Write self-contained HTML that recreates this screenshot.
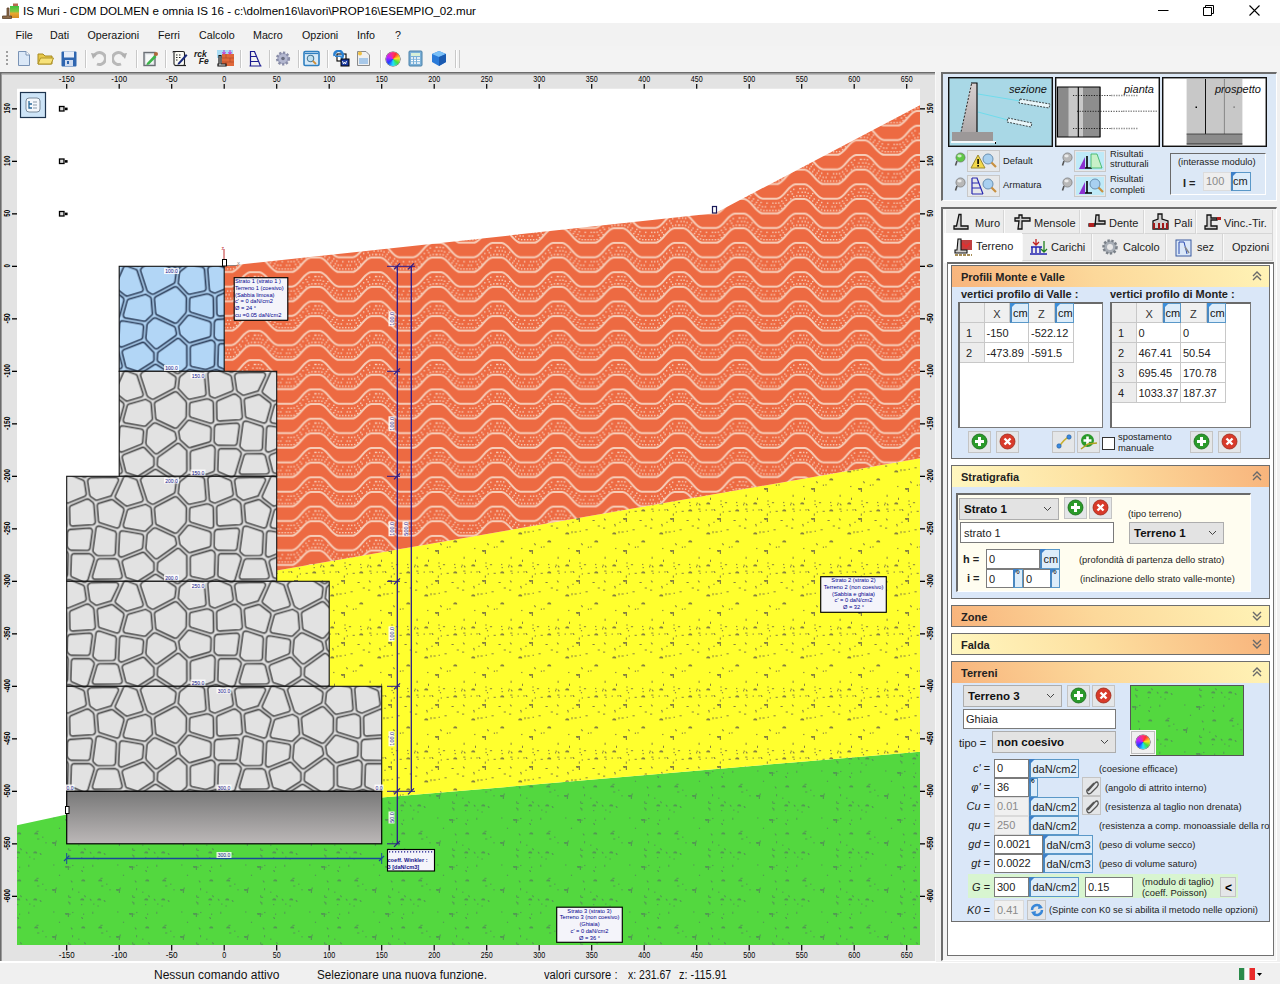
<!DOCTYPE html><html><head><meta charset="utf-8"><style>
*{margin:0;padding:0;box-sizing:border-box}
html,body{width:1280px;height:984px;overflow:hidden;background:#f0f0f0;font-family:"Liberation Sans",sans-serif;color:#000}
div{position:absolute}
.t{white-space:nowrap;line-height:1}
.ic{position:absolute}
.btn{background:#ebebeb;border:1px solid #c9c9c9}
.hdr{border:1px solid #6e6e6e;font-weight:bold;font-size:11.5px;color:#1e1e1e}
.inp{background:#fff;border:1px solid #828790;font-size:11px}
.unit{background:#fff;border:1px solid #3d8ed8;font-size:11px}
.cell{font-size:11px}
</style></head><body>
<div style="left:0px;top:0px;width:1280px;height:23px;background:#fff"></div>
<svg style="position:absolute;left:2px;top:3px" width="17" height="16"><defs><linearGradient id="ti" x1="0" y1="0" x2="0" y2="1"><stop offset="0" stop-color="#40c040"/><stop offset="0.45" stop-color="#80c840"/><stop offset="0.6" stop-color="#e8a830"/><stop offset="1" stop-color="#d88a20"/></linearGradient></defs><rect x="11" y="0.5" width="5" height="3" fill="#b86a50"/><rect x="8" y="3" width="9" height="12" fill="url(#ti)"/><path d="M0.5,15.5 H9.5 V13 H7 V5 H5 V13 H0.5Z" fill="#8a6a48" stroke="#5a4028" stroke-width="0.8"/></svg>
<div class="t" style="left:23px;top:5px;font-size:11.6px;color:#000">IS Muri - CDM DOLMEN e omnia IS 16 - c:\dolmen16\lavori\PROP16\ESEMPIO_02.mur</div>
<svg style="position:absolute;left:1150px;top:0" width="130" height="22"><path d="M8,10.5 H18.5" stroke="#000" stroke-width="1"/><path d="M53.5,7.5 h8 v8 h-8z M55.5,7.5 v-2 h8 v8 h-2" fill="none" stroke="#000" stroke-width="1"/><path d="M99.5,5.5 L109.5,15.5 M109.5,5.5 L99.5,15.5" stroke="#000" stroke-width="1.1"/></svg>
<div style="left:0px;top:23px;width:1280px;height:23px;background:#f2f2f2"></div>
<div class="t" style="left:15.5px;top:29.5px;font-size:10.7px;color:#111">File</div>
<div class="t" style="left:50px;top:29.5px;font-size:10.7px;color:#111">Dati</div>
<div class="t" style="left:87.5px;top:29.5px;font-size:10.7px;color:#111">Operazioni</div>
<div class="t" style="left:158px;top:29.5px;font-size:10.7px;color:#111">Ferri</div>
<div class="t" style="left:199px;top:29.5px;font-size:10.7px;color:#111">Calcolo</div>
<div class="t" style="left:253px;top:29.5px;font-size:10.7px;color:#111">Macro</div>
<div class="t" style="left:302px;top:29.5px;font-size:10.7px;color:#111">Opzioni</div>
<div class="t" style="left:357px;top:29.5px;font-size:10.7px;color:#111">Info</div>
<div class="t" style="left:395px;top:29.5px;font-size:10.7px;color:#111">?</div>
<div style="left:0px;top:46px;width:1280px;height:26px;background:#f3f3f3"></div>
<div id="tb" style="left:0;top:46px;width:470px;height:26px"></div>
<svg style="position:absolute;left:5px;top:50px" width="4" height="17" viewBox="0 0 4 17"><rect x="1" y="1" width="2" height="2" fill="#a0a0a0"/><rect x="1" y="5" width="2" height="2" fill="#a0a0a0"/><rect x="1" y="9" width="2" height="2" fill="#a0a0a0"/><rect x="1" y="13" width="2" height="2" fill="#a0a0a0"/></svg>
<svg style="position:absolute;left:17px;top:50px" width="14" height="17" viewBox="0 0 14 17"><path d="M1.5,1.5 H9 L12.5,5 V15.5 H1.5Z" fill="#dbe8f7" stroke="#7a93b5"/><path d="M9,1.5 V5 H12.5" fill="#fff" stroke="#7a93b5"/></svg>
<svg style="position:absolute;left:37px;top:51px" width="17" height="15" viewBox="0 0 17 15"><path d="M1,3 H6 L8,5 H15 V13 H1Z" fill="#e7c84a" stroke="#a88a20"/><path d="M1,13 L3.5,7 H16.5 L14,13Z" fill="#f7e27a" stroke="#b09428"/></svg>
<svg style="position:absolute;left:61px;top:50px" width="16" height="17" viewBox="0 0 16 17"><rect x="0.5" y="1.5" width="15" height="15" rx="1" fill="#2f66b0"/><rect x="3" y="1.5" width="10" height="6" fill="#e8eef8"/><rect x="4" y="10" width="8" height="6" fill="#cfdcf0"/><rect x="6" y="11" width="2" height="3" fill="#2f66b0"/></svg>
<svg style="position:absolute;left:84.5px;top:50px" width="2" height="18" viewBox="0 0 2 18"><rect x="0" y="0" width="1" height="18" fill="#c8c8c8"/><rect x="1" y="0" width="1" height="18" fill="#fff"/></svg>
<svg style="position:absolute;left:135.5px;top:50px" width="2" height="18" viewBox="0 0 2 18"><rect x="0" y="0" width="1" height="18" fill="#c8c8c8"/><rect x="1" y="0" width="1" height="18" fill="#fff"/></svg>
<svg style="position:absolute;left:165px;top:50px" width="2" height="18" viewBox="0 0 2 18"><rect x="0" y="0" width="1" height="18" fill="#c8c8c8"/><rect x="1" y="0" width="1" height="18" fill="#fff"/></svg>
<svg style="position:absolute;left:240px;top:50px" width="2" height="18" viewBox="0 0 2 18"><rect x="0" y="0" width="1" height="18" fill="#c8c8c8"/><rect x="1" y="0" width="1" height="18" fill="#fff"/></svg>
<svg style="position:absolute;left:269px;top:50px" width="2" height="18" viewBox="0 0 2 18"><rect x="0" y="0" width="1" height="18" fill="#c8c8c8"/><rect x="1" y="0" width="1" height="18" fill="#fff"/></svg>
<svg style="position:absolute;left:298px;top:50px" width="2" height="18" viewBox="0 0 2 18"><rect x="0" y="0" width="1" height="18" fill="#c8c8c8"/><rect x="1" y="0" width="1" height="18" fill="#fff"/></svg>
<svg style="position:absolute;left:327px;top:50px" width="2" height="18" viewBox="0 0 2 18"><rect x="0" y="0" width="1" height="18" fill="#c8c8c8"/><rect x="1" y="0" width="1" height="18" fill="#fff"/></svg>
<svg style="position:absolute;left:379.5px;top:50px" width="2" height="18" viewBox="0 0 2 18"><rect x="0" y="0" width="1" height="18" fill="#c8c8c8"/><rect x="1" y="0" width="1" height="18" fill="#fff"/></svg>
<svg style="position:absolute;left:454.5px;top:50px" width="2" height="18" viewBox="0 0 2 18"><rect x="0" y="0" width="1" height="18" fill="#c8c8c8"/><rect x="1" y="0" width="1" height="18" fill="#fff"/></svg>
<svg style="position:absolute;left:90px;top:50px" width="16" height="17" viewBox="0 0 16 17"><path d="M4,6 A6,6 0 1 1 7,14" fill="none" stroke="#b8b8b8" stroke-width="3"/><path d="M1,3 L7,4 L3,9Z" fill="#b0b0b0"/></svg>
<svg style="position:absolute;left:112px;top:50px" width="16" height="17" viewBox="0 0 16 17"><path d="M12,6 A6,6 0 1 0 9,14" fill="none" stroke="#b8b8b8" stroke-width="3"/><path d="M15,3 L9,4 L13,9Z" fill="#b0b0b0"/></svg>
<svg style="position:absolute;left:142px;top:50px" width="17" height="17" viewBox="0 0 17 17"><rect x="2" y="2.5" width="11" height="13" fill="#dfe3e6" stroke="#6a6f75" stroke-width="1.4"/><rect x="4" y="4.5" width="7" height="9" fill="#f6f8f8"/><path d="M5,13 L12.5,5 L14.5,7 L7,14.5 L4.5,15Z" fill="#3cb54a"/><circle cx="14" cy="4" r="2" fill="#b0683a"/></svg>
<svg style="position:absolute;left:171px;top:50px" width="17" height="17" viewBox="0 0 17 17"><path d="M3,1.5 H12 Q13.5,1.5 13.5,3 V14 Q13.5,15.5 12,15.5 H5 Q3,15.5 3,14Z" fill="#fbfbf4" stroke="#222" stroke-width="1.1"/><path d="M1.5,2 Q3,0.5 4.5,2" fill="none" stroke="#222"/><path d="M5,5h1.5M8,5h1.5M5,7.5h1.5M8,7.5h1.5M5,10h1.5" stroke="#222" stroke-width="1.2"/><path d="M7,13 L15,4 L16.5,5.5 L8.5,14.2 L6.5,14.8Z" fill="#1a2a7a"/><path d="M4,15.5 H15" stroke="#222" stroke-width="1.2"/></svg>
<div class="t" style="left:194px;top:50.5px;font:italic bold 8.5px 'Liberation Sans',sans-serif;color:#222;line-height:7.5px">rck<br>&nbsp;&nbsp;Fe</div>
<svg style="position:absolute;left:216px;top:49px" width="18" height="18" viewBox="0 0 18 18"><rect x="1" y="1" width="16" height="8" fill="#a8dcf4"/><rect x="6" y="5" width="12" height="12" fill="#e0683a"/><path d="M6,9H18M6,13H18M10,5v4M14,9v4M10,13v4" stroke="#b04a28" stroke-width="0.7"/><path d="M2,17 H10 V15 H5 V6.5 H3 V15 H2Z" fill="#f2f2f2" stroke="#111" stroke-width="1.2"/><path d="M8,1v4M6.3,3.3l1.7,1.7 1.7-1.7M14,1v4M12.3,3.3l1.7,1.7 1.7-1.7" stroke="#c040d0" stroke-width="1.1" fill="none"/></svg>
<svg style="position:absolute;left:248px;top:50px" width="15" height="17" viewBox="0 0 15 17"><path d="M2.5,1 V16 M2,1.5 H6.5 L12.5,16 M2,6.5 H8.5 M2,11.5 H10.5 M1.5,16 H13.5" fill="none" stroke="#1c1c90" stroke-width="1.2"/></svg>
<svg style="position:absolute;left:275px;top:50px" width="16" height="17" viewBox="0 0 16 17"><circle cx="8" cy="8.5" r="5.8" fill="#a8acc8" stroke="#8a8ea8" stroke-width="2.6" stroke-dasharray="2.2 1.6"/><circle cx="8" cy="8.5" r="4.2" fill="#b4b8d0"/><circle cx="8" cy="8.5" r="1.8" fill="#6a6e80"/></svg>
<svg style="position:absolute;left:303px;top:50px" width="17" height="17" viewBox="0 0 17 17"><rect x="1" y="1.5" width="15" height="14" rx="1.2" fill="#d8eaf8" stroke="#2f7fc0" stroke-width="1.6"/><path d="M2,3.5 H15" stroke="#2f7fc0" stroke-width="1.2"/><circle cx="7.5" cy="8.5" r="3.2" fill="#bfe0f0" stroke="#4a7a9a" stroke-width="1.1"/><path d="M9.8,10.8 L13,14" stroke="#d0903a" stroke-width="1.8"/></svg>
<svg style="position:absolute;left:333px;top:50px" width="17" height="17" viewBox="0 0 17 17"><rect x="4" y="4" width="9" height="7" fill="#fff" stroke="#000" stroke-width="1.1"/><path d="M1.5,6 A4.2,4.2 0 1 1 8,8.5" fill="none" stroke="#2a80d0" stroke-width="2.4"/><path d="M2,6.2 H8.5" stroke="#2a80d0" stroke-width="1.5"/><rect x="8" y="9" width="8" height="7" fill="#1a3aa0" stroke="#000" stroke-width="1"/><path d="M9.5,11 l1,3 1-2 1,2 1-3" stroke="#fff" fill="none" stroke-width="0.9"/></svg>
<svg style="position:absolute;left:356px;top:50px" width="15" height="17" viewBox="0 0 15 17"><path d="M1.5,1.5 H10 L13.5,5 V15.5 H1.5Z" fill="#f0f0f0" stroke="#8a8a8a"/><rect x="3" y="8" width="9" height="6" fill="#a8c8e8"/><circle cx="4" cy="3.5" r="2" fill="#f0c040"/></svg>
<div style="left:386px;top:52px;width:14px;height:14px;border-radius:50%;background:conic-gradient(from 0deg,#ff3070 0deg,#ff3030 30deg,#ffe020 80deg,#40e040 130deg,#20e0ff 180deg,#2040ff 230deg,#c020ff 290deg,#ff3070 360deg);box-shadow:0 0 0 0.6px #555"></div>
<svg style="position:absolute;left:408px;top:50px" width="15" height="17" viewBox="0 0 15 17"><rect x="1" y="1" width="13" height="15" rx="1" fill="#7ab0d8" stroke="#4a80a8"/><rect x="3" y="3" width="9" height="3" fill="#d8f0d8"/><path d="M3,8h2M6,8h2M9,8h3M3,10.5h2M6,10.5h2M9,10.5h3M3,13h2M6,13h2M9,13h3" stroke="#fff" stroke-width="1.5"/></svg>
<svg style="position:absolute;left:430px;top:50px" width="17" height="17" viewBox="0 0 17 17"><path d="M2,4 L9,1 L16,4 V12 L9,16 L2,12Z" fill="#2a7ad8"/><path d="M2,4 L9,7 L16,4 L9,1Z" fill="#7ac0f8"/><path d="M9,7 V16 L16,12 V4Z" fill="#1a5ab0"/></svg>
<svg style="position:absolute;left:459px;top:50px" width="2" height="18" viewBox="0 0 2 18"><rect x="0" y="0" width="1" height="18" fill="#c8c8c8"/></svg>
<svg width="1280" height="984" style="position:absolute;left:0;top:0" font-family="Liberation Sans, sans-serif" font-size="8.5">
<rect x="0" y="72" width="936" height="890" fill="#e3e3e3"/>
<rect x="0" y="72" width="936" height="1.6" fill="#6b6b6b"/>
<rect x="0" y="72" width="1.6" height="890" fill="#6b6b6b"/>
<rect x="1.6" y="73.6" width="934" height="1" fill="#a0a0a0"/>
<rect x="935" y="72" width="1" height="890" fill="#f8f8f8"/>
<rect x="0" y="961" width="936" height="1" fill="#ffffff"/>
<rect x="66.1" y="84" width="1.2" height="6" fill="#000"/>
<text x="66.7" y="81.9" text-anchor="middle" font-size="9" textLength="15.8" lengthAdjust="spacingAndGlyphs">-150</text>
<rect x="66.1" y="945" width="1.2" height="5.5" fill="#000"/>
<text x="66.7" y="957.8" text-anchor="middle" font-size="9" textLength="15.8" lengthAdjust="spacingAndGlyphs">-150</text>
<rect x="118.6" y="84" width="1.2" height="6" fill="#000"/>
<text x="119.2" y="81.9" text-anchor="middle" font-size="9" textLength="15.8" lengthAdjust="spacingAndGlyphs">-100</text>
<rect x="118.6" y="945" width="1.2" height="5.5" fill="#000"/>
<text x="119.2" y="957.8" text-anchor="middle" font-size="9" textLength="15.8" lengthAdjust="spacingAndGlyphs">-100</text>
<rect x="171.1" y="84" width="1.2" height="6" fill="#000"/>
<text x="171.7" y="81.9" text-anchor="middle" font-size="9" textLength="11.9" lengthAdjust="spacingAndGlyphs">-50</text>
<rect x="171.1" y="945" width="1.2" height="5.5" fill="#000"/>
<text x="171.7" y="957.8" text-anchor="middle" font-size="9" textLength="11.9" lengthAdjust="spacingAndGlyphs">-50</text>
<rect x="223.6" y="84" width="1.2" height="6" fill="#000"/>
<text x="224.2" y="81.9" text-anchor="middle" font-size="9" textLength="4.0" lengthAdjust="spacingAndGlyphs">0</text>
<rect x="223.6" y="945" width="1.2" height="5.5" fill="#000"/>
<text x="224.2" y="957.8" text-anchor="middle" font-size="9" textLength="4.0" lengthAdjust="spacingAndGlyphs">0</text>
<rect x="276.1" y="84" width="1.2" height="6" fill="#000"/>
<text x="276.7" y="81.9" text-anchor="middle" font-size="9" textLength="7.9" lengthAdjust="spacingAndGlyphs">50</text>
<rect x="276.1" y="945" width="1.2" height="5.5" fill="#000"/>
<text x="276.7" y="957.8" text-anchor="middle" font-size="9" textLength="7.9" lengthAdjust="spacingAndGlyphs">50</text>
<rect x="328.6" y="84" width="1.2" height="6" fill="#000"/>
<text x="329.2" y="81.9" text-anchor="middle" font-size="9" textLength="11.9" lengthAdjust="spacingAndGlyphs">100</text>
<rect x="328.6" y="945" width="1.2" height="5.5" fill="#000"/>
<text x="329.2" y="957.8" text-anchor="middle" font-size="9" textLength="11.9" lengthAdjust="spacingAndGlyphs">100</text>
<rect x="381.1" y="84" width="1.2" height="6" fill="#000"/>
<text x="381.7" y="81.9" text-anchor="middle" font-size="9" textLength="11.9" lengthAdjust="spacingAndGlyphs">150</text>
<rect x="381.1" y="945" width="1.2" height="5.5" fill="#000"/>
<text x="381.7" y="957.8" text-anchor="middle" font-size="9" textLength="11.9" lengthAdjust="spacingAndGlyphs">150</text>
<rect x="433.6" y="84" width="1.2" height="6" fill="#000"/>
<text x="434.2" y="81.9" text-anchor="middle" font-size="9" textLength="11.9" lengthAdjust="spacingAndGlyphs">200</text>
<rect x="433.6" y="945" width="1.2" height="5.5" fill="#000"/>
<text x="434.2" y="957.8" text-anchor="middle" font-size="9" textLength="11.9" lengthAdjust="spacingAndGlyphs">200</text>
<rect x="486.1" y="84" width="1.2" height="6" fill="#000"/>
<text x="486.7" y="81.9" text-anchor="middle" font-size="9" textLength="11.9" lengthAdjust="spacingAndGlyphs">250</text>
<rect x="486.1" y="945" width="1.2" height="5.5" fill="#000"/>
<text x="486.7" y="957.8" text-anchor="middle" font-size="9" textLength="11.9" lengthAdjust="spacingAndGlyphs">250</text>
<rect x="538.6" y="84" width="1.2" height="6" fill="#000"/>
<text x="539.2" y="81.9" text-anchor="middle" font-size="9" textLength="11.9" lengthAdjust="spacingAndGlyphs">300</text>
<rect x="538.6" y="945" width="1.2" height="5.5" fill="#000"/>
<text x="539.2" y="957.8" text-anchor="middle" font-size="9" textLength="11.9" lengthAdjust="spacingAndGlyphs">300</text>
<rect x="591.1" y="84" width="1.2" height="6" fill="#000"/>
<text x="591.7" y="81.9" text-anchor="middle" font-size="9" textLength="11.9" lengthAdjust="spacingAndGlyphs">350</text>
<rect x="591.1" y="945" width="1.2" height="5.5" fill="#000"/>
<text x="591.7" y="957.8" text-anchor="middle" font-size="9" textLength="11.9" lengthAdjust="spacingAndGlyphs">350</text>
<rect x="643.6" y="84" width="1.2" height="6" fill="#000"/>
<text x="644.2" y="81.9" text-anchor="middle" font-size="9" textLength="11.9" lengthAdjust="spacingAndGlyphs">400</text>
<rect x="643.6" y="945" width="1.2" height="5.5" fill="#000"/>
<text x="644.2" y="957.8" text-anchor="middle" font-size="9" textLength="11.9" lengthAdjust="spacingAndGlyphs">400</text>
<rect x="696.1" y="84" width="1.2" height="6" fill="#000"/>
<text x="696.7" y="81.9" text-anchor="middle" font-size="9" textLength="11.9" lengthAdjust="spacingAndGlyphs">450</text>
<rect x="696.1" y="945" width="1.2" height="5.5" fill="#000"/>
<text x="696.7" y="957.8" text-anchor="middle" font-size="9" textLength="11.9" lengthAdjust="spacingAndGlyphs">450</text>
<rect x="748.6" y="84" width="1.2" height="6" fill="#000"/>
<text x="749.2" y="81.9" text-anchor="middle" font-size="9" textLength="11.9" lengthAdjust="spacingAndGlyphs">500</text>
<rect x="748.6" y="945" width="1.2" height="5.5" fill="#000"/>
<text x="749.2" y="957.8" text-anchor="middle" font-size="9" textLength="11.9" lengthAdjust="spacingAndGlyphs">500</text>
<rect x="801.1" y="84" width="1.2" height="6" fill="#000"/>
<text x="801.7" y="81.9" text-anchor="middle" font-size="9" textLength="11.9" lengthAdjust="spacingAndGlyphs">550</text>
<rect x="801.1" y="945" width="1.2" height="5.5" fill="#000"/>
<text x="801.7" y="957.8" text-anchor="middle" font-size="9" textLength="11.9" lengthAdjust="spacingAndGlyphs">550</text>
<rect x="853.6" y="84" width="1.2" height="6" fill="#000"/>
<text x="854.2" y="81.9" text-anchor="middle" font-size="9" textLength="11.9" lengthAdjust="spacingAndGlyphs">600</text>
<rect x="853.6" y="945" width="1.2" height="5.5" fill="#000"/>
<text x="854.2" y="957.8" text-anchor="middle" font-size="9" textLength="11.9" lengthAdjust="spacingAndGlyphs">600</text>
<rect x="906.1" y="84" width="1.2" height="6" fill="#000"/>
<text x="906.7" y="81.9" text-anchor="middle" font-size="9" textLength="11.9" lengthAdjust="spacingAndGlyphs">650</text>
<rect x="906.1" y="945" width="1.2" height="5.5" fill="#000"/>
<text x="906.7" y="957.8" text-anchor="middle" font-size="9" textLength="11.9" lengthAdjust="spacingAndGlyphs">650</text>
<rect x="12" y="108.2" width="5" height="1.3" fill="#000"/>
<text transform="translate(9.6,108.3) rotate(-90)" text-anchor="middle" textLength="10.2" lengthAdjust="spacingAndGlyphs" font-weight="bold">150</text>
<rect x="920" y="108.2" width="5" height="1.3" fill="#000"/>
<text transform="translate(932.5,108.3) rotate(-90)" text-anchor="middle" textLength="10.2" lengthAdjust="spacingAndGlyphs" font-weight="bold">150</text>
<rect x="12" y="160.7" width="5" height="1.3" fill="#000"/>
<text transform="translate(9.6,160.8) rotate(-90)" text-anchor="middle" textLength="10.2" lengthAdjust="spacingAndGlyphs" font-weight="bold">100</text>
<rect x="920" y="160.7" width="5" height="1.3" fill="#000"/>
<text transform="translate(932.5,160.8) rotate(-90)" text-anchor="middle" textLength="10.2" lengthAdjust="spacingAndGlyphs" font-weight="bold">100</text>
<rect x="12" y="213.2" width="5" height="1.3" fill="#000"/>
<text transform="translate(9.6,213.3) rotate(-90)" text-anchor="middle" textLength="6.8" lengthAdjust="spacingAndGlyphs" font-weight="bold">50</text>
<rect x="920" y="213.2" width="5" height="1.3" fill="#000"/>
<text transform="translate(932.5,213.3) rotate(-90)" text-anchor="middle" textLength="6.8" lengthAdjust="spacingAndGlyphs" font-weight="bold">50</text>
<rect x="12" y="265.7" width="5" height="1.3" fill="#000"/>
<text transform="translate(9.6,265.8) rotate(-90)" text-anchor="middle" textLength="3.4" lengthAdjust="spacingAndGlyphs" font-weight="bold">0</text>
<rect x="920" y="265.7" width="5" height="1.3" fill="#000"/>
<text transform="translate(932.5,265.8) rotate(-90)" text-anchor="middle" textLength="3.4" lengthAdjust="spacingAndGlyphs" font-weight="bold">0</text>
<rect x="12" y="318.2" width="5" height="1.3" fill="#000"/>
<text transform="translate(9.6,318.3) rotate(-90)" text-anchor="middle" textLength="10.2" lengthAdjust="spacingAndGlyphs" font-weight="bold">-50</text>
<rect x="920" y="318.2" width="5" height="1.3" fill="#000"/>
<text transform="translate(932.5,318.3) rotate(-90)" text-anchor="middle" textLength="10.2" lengthAdjust="spacingAndGlyphs" font-weight="bold">-50</text>
<rect x="12" y="370.7" width="5" height="1.3" fill="#000"/>
<text transform="translate(9.6,370.8) rotate(-90)" text-anchor="middle" textLength="13.6" lengthAdjust="spacingAndGlyphs" font-weight="bold">-100</text>
<rect x="920" y="370.7" width="5" height="1.3" fill="#000"/>
<text transform="translate(932.5,370.8) rotate(-90)" text-anchor="middle" textLength="13.6" lengthAdjust="spacingAndGlyphs" font-weight="bold">-100</text>
<rect x="12" y="423.2" width="5" height="1.3" fill="#000"/>
<text transform="translate(9.6,423.3) rotate(-90)" text-anchor="middle" textLength="13.6" lengthAdjust="spacingAndGlyphs" font-weight="bold">-150</text>
<rect x="920" y="423.2" width="5" height="1.3" fill="#000"/>
<text transform="translate(932.5,423.3) rotate(-90)" text-anchor="middle" textLength="13.6" lengthAdjust="spacingAndGlyphs" font-weight="bold">-150</text>
<rect x="12" y="475.7" width="5" height="1.3" fill="#000"/>
<text transform="translate(9.6,475.8) rotate(-90)" text-anchor="middle" textLength="13.6" lengthAdjust="spacingAndGlyphs" font-weight="bold">-200</text>
<rect x="920" y="475.7" width="5" height="1.3" fill="#000"/>
<text transform="translate(932.5,475.8) rotate(-90)" text-anchor="middle" textLength="13.6" lengthAdjust="spacingAndGlyphs" font-weight="bold">-200</text>
<rect x="12" y="528.2" width="5" height="1.3" fill="#000"/>
<text transform="translate(9.6,528.3) rotate(-90)" text-anchor="middle" textLength="13.6" lengthAdjust="spacingAndGlyphs" font-weight="bold">-250</text>
<rect x="920" y="528.2" width="5" height="1.3" fill="#000"/>
<text transform="translate(932.5,528.3) rotate(-90)" text-anchor="middle" textLength="13.6" lengthAdjust="spacingAndGlyphs" font-weight="bold">-250</text>
<rect x="12" y="580.7" width="5" height="1.3" fill="#000"/>
<text transform="translate(9.6,580.8) rotate(-90)" text-anchor="middle" textLength="13.6" lengthAdjust="spacingAndGlyphs" font-weight="bold">-300</text>
<rect x="920" y="580.7" width="5" height="1.3" fill="#000"/>
<text transform="translate(932.5,580.8) rotate(-90)" text-anchor="middle" textLength="13.6" lengthAdjust="spacingAndGlyphs" font-weight="bold">-300</text>
<rect x="12" y="633.2" width="5" height="1.3" fill="#000"/>
<text transform="translate(9.6,633.3) rotate(-90)" text-anchor="middle" textLength="13.6" lengthAdjust="spacingAndGlyphs" font-weight="bold">-350</text>
<rect x="920" y="633.2" width="5" height="1.3" fill="#000"/>
<text transform="translate(932.5,633.3) rotate(-90)" text-anchor="middle" textLength="13.6" lengthAdjust="spacingAndGlyphs" font-weight="bold">-350</text>
<rect x="12" y="685.7" width="5" height="1.3" fill="#000"/>
<text transform="translate(9.6,685.8) rotate(-90)" text-anchor="middle" textLength="13.6" lengthAdjust="spacingAndGlyphs" font-weight="bold">-400</text>
<rect x="920" y="685.7" width="5" height="1.3" fill="#000"/>
<text transform="translate(932.5,685.8) rotate(-90)" text-anchor="middle" textLength="13.6" lengthAdjust="spacingAndGlyphs" font-weight="bold">-400</text>
<rect x="12" y="738.2" width="5" height="1.3" fill="#000"/>
<text transform="translate(9.6,738.3) rotate(-90)" text-anchor="middle" textLength="13.6" lengthAdjust="spacingAndGlyphs" font-weight="bold">-450</text>
<rect x="920" y="738.2" width="5" height="1.3" fill="#000"/>
<text transform="translate(932.5,738.3) rotate(-90)" text-anchor="middle" textLength="13.6" lengthAdjust="spacingAndGlyphs" font-weight="bold">-450</text>
<rect x="12" y="790.7" width="5" height="1.3" fill="#000"/>
<text transform="translate(9.6,790.8) rotate(-90)" text-anchor="middle" textLength="13.6" lengthAdjust="spacingAndGlyphs" font-weight="bold">-500</text>
<rect x="920" y="790.7" width="5" height="1.3" fill="#000"/>
<text transform="translate(932.5,790.8) rotate(-90)" text-anchor="middle" textLength="13.6" lengthAdjust="spacingAndGlyphs" font-weight="bold">-500</text>
<rect x="12" y="843.2" width="5" height="1.3" fill="#000"/>
<text transform="translate(9.6,843.3) rotate(-90)" text-anchor="middle" textLength="13.6" lengthAdjust="spacingAndGlyphs" font-weight="bold">-550</text>
<rect x="920" y="843.2" width="5" height="1.3" fill="#000"/>
<text transform="translate(932.5,843.3) rotate(-90)" text-anchor="middle" textLength="13.6" lengthAdjust="spacingAndGlyphs" font-weight="bold">-550</text>
<rect x="12" y="895.7" width="5" height="1.3" fill="#000"/>
<text transform="translate(9.6,895.8) rotate(-90)" text-anchor="middle" textLength="13.6" lengthAdjust="spacingAndGlyphs" font-weight="bold">-600</text>
<rect x="920" y="895.7" width="5" height="1.3" fill="#000"/>
<text transform="translate(932.5,895.8) rotate(-90)" text-anchor="middle" textLength="13.6" lengthAdjust="spacingAndGlyphs" font-weight="bold">-600</text>
</svg>
<svg width="1280" height="984" style="position:absolute;left:0;top:0">
<defs><pattern id="stg" patternUnits="userSpaceOnUse" width="147" height="105" x="66.7" y="266.3">
<rect width="147" height="105" fill="#e2e2e2"/>
<path d="M-5.2,28.0 -6.8,27.8 -22.9,31.5 -23.7,32.4 -23.9,33.5 -24.1,43.5 -23.6,45.1 -22.2,46.0 -3.6,51.8 -2.4,51.8 -1.3,51.4 -0.5,50.4 -0.3,49.2 -0.6,31.7 -1.0,30.3 -2.1,29.4Z M-33.7,67.5 -32.9,68.9 -25.7,75.5 -24.6,76.2 -23.2,76.1 -5.0,70.9 -3.6,70.0 -3.1,68.4 -2.8,57.8 -3.3,56.2 -4.6,55.2 -23.7,49.3 -25.2,49.3 -26.4,50.1 -34.9,60.2Z M-23.3,81.8 -23.2,98.8 -22.4,99.7 -21.4,100.2 -8.8,103.0 -7.3,102.9 -1.1,100.6 0.1,99.7 0.6,98.2 1.2,77.7 0.4,75.7 -1.9,74.1 -3.2,74.1 -21.5,79.4 -22.8,80.3Z M4.2,-6.7 4.6,-5.2 5.8,-4.2 17.0,0.6 18.5,0.7 19.8,-0.0 21.1,-1.7 27.2,-21.9 27.2,-23.3 26.5,-24.5 24.3,-26.6 22.5,-27.4 7.4,-27.5 6.1,-27.2 5.2,-26.2 4.8,-25.0Z M26.0,-5.4 25.9,-4.2 26.4,-3.1 27.3,-2.3 28.5,-2.1 52.7,-2.5 54.1,-3.0 55.1,-4.2 55.2,-5.7 51.6,-19.9 50.2,-21.8 48.4,-22.4 32.9,-22.2 31.4,-21.7 30.4,-20.3Z M57.3,-21.4 56.3,-20.7 55.7,-19.6 55.7,-18.4 59.0,-5.3 59.6,-4.1 60.7,-3.4 71.1,-0.3 85.9,-9.5 86.7,-10.5 87.1,-11.7 87.0,-18.6 78.1,-28.0 76.8,-28.8 75.3,-28.6Z M90.7,-11.7 91.0,-10.5 91.9,-9.5 109.5,1.8 111.1,2.2 112.6,1.6 119.7,-4.7 119.9,-25.6 113.2,-32.0 112.2,-32.5 111.0,-32.6 110.0,-32.2 91.9,-19.2 91.1,-18.3 90.8,-17.2Z M147.6,-6.8 148.0,-28.4 146.2,-30.3 145.1,-30.9 143.8,-30.9 125.5,-25.6 124.2,-24.7 123.7,-23.2 123.6,-7.3 123.8,-6.2 124.6,-5.3 138.2,-2.0 139.7,-2.1 145.9,-4.4 147.1,-5.3Z M3.2,-1.4 1.3,-1.5 -4.1,0.5 -5.4,1.6 -5.8,3.2 -4.2,23.0 -3.8,24.3 -2.7,25.2 1.2,26.7 17.7,20.1 18.6,19.4 19.2,18.4 19.3,17.3 17.6,6.1 17.1,4.9 16.1,4.1Z M22.5,2.4 21.2,4.1 21.1,5.3 23.1,18.5 24.0,20.1 29.1,23.8 30.4,23.8 44.3,19.6 51.3,4.9 51.5,3.6 51.1,2.4 50.1,1.5 48.9,1.2 24.3,1.6Z M60.0,0.1 58.7,0.0 57.6,0.5 56.8,1.5 48.6,20.0 48.9,21.1 49.6,22.0 58.8,29.1 59.9,29.6 61.1,29.5 74.4,25.6 75.5,24.9 76.2,23.7 76.1,22.3 70.3,4.6 69.7,3.6Z M75.2,1.6 74.0,3.5 74.1,4.6 80.4,24.0 81.5,25.4 84.7,27.4 85.9,27.8 87.3,27.5 106.7,17.2 107.7,16.4 108.1,15.2 109.1,7.6 108.9,6.1 107.9,5.0 90.2,-6.3 88.8,-6.7 87.4,-6.3Z M120.9,27.0 122.0,27.7 123.3,27.7 137.0,24.8 138.1,24.3 138.9,23.3 139.1,22.0 137.6,3.4 136.9,1.9 135.5,1.0 122.3,-1.5 113.7,5.3 112.8,7.0 111.7,17.0Z M4.6,29.4 3.4,30.4 3.0,31.8 3.3,47.1 3.7,48.4 4.7,49.3 6.1,49.6 26.0,48.2 27.3,47.7 28.2,46.7 28.4,45.4 27.0,28.2 26.1,26.3 22.5,23.5 21.2,22.9 19.9,23.1Z M44.1,23.6 31.6,27.4 30.9,28.4 30.7,29.6 31.9,44.4 32.5,45.8 33.8,46.6 49.5,51.5 50.8,51.6 52.0,50.9 52.7,49.7 57.0,34.2 56.9,32.7 56.1,31.5 46.4,24.0 45.3,23.6Z M84.3,32.6 83.9,31.4 83.0,30.6 78.9,28.3 62.4,32.9 61.2,33.6 60.6,34.7 56.8,48.4 56.9,49.8 57.6,51.0 58.9,51.6 77.0,54.8 78.2,54.7 79.2,54.2 85.3,48.3 85.5,47.1Z M119.5,31.8 118.8,29.9 110.6,21.4 109.1,20.6 107.5,20.9 89.3,30.5 88.2,31.5 87.9,33.0 89.1,46.5 89.5,47.8 90.6,48.6 107.6,56.6 109.3,56.7 110.7,55.9 118.7,46.8 119.3,45.1Z M140.2,27.8 124.1,31.5 123.3,32.4 123.1,33.5 122.9,43.5 123.4,45.1 124.8,46.0 143.4,51.8 144.6,51.8 145.7,51.4 146.5,50.4 146.7,49.2 146.4,31.7 146.0,30.3 144.9,29.4 141.8,28.0Z M20.5,74.0 21.7,73.7 22.6,72.9 23.1,71.8 25.4,55.0 25.2,53.5 24.1,52.3 22.6,52.0 3.5,53.4 1.7,54.2 0.8,56.2 0.5,69.7 1.3,71.7 3.1,73.2 4.8,73.9Z M29.6,78.5 31.5,79.2 45.9,79.0 47.2,78.7 48.1,77.8 48.5,76.6 49.4,57.3 48.5,55.3 32.8,50.1 31.3,50.1 30.0,50.9 29.4,52.2 26.4,73.9 26.5,75.1 27.2,76.1Z M52.0,77.8 52.3,79.1 53.1,80.1 54.3,80.6 55.6,80.4 74.1,72.9 75.3,72.1 75.8,70.7 76.6,60.8 76.4,59.5 75.7,58.5 74.5,58.0 56.0,54.8 54.6,54.9 53.5,55.8 53.0,57.2Z M89.3,52.0 87.9,51.8 86.5,52.4 81.3,57.1 80.4,58.8 79.3,71.7 80.0,73.8 87.7,81.6 88.7,82.3 89.9,82.4 91.0,81.9 108.5,69.5 109.4,68.3 109.5,66.9 108.5,62.1 108.0,61.0 107.1,60.3Z M123.3,49.3 121.8,49.3 120.6,50.1 112.1,60.2 113.3,67.5 114.1,68.9 121.3,75.5 122.4,76.2 123.8,76.1 142.0,70.9 143.4,70.0 143.9,68.4 144.2,57.8 143.7,56.2 142.4,55.2Z M27.2,83.1 27.2,81.7 26.5,80.5 24.3,78.4 22.5,77.6 7.4,77.5 6.1,77.8 5.2,78.8 4.8,80.0 4.2,98.3 4.6,99.8 5.8,100.8 17.0,105.6 18.5,105.7 19.8,105.0 21.1,103.3Z M52.7,102.5 54.1,102.0 55.1,100.8 55.2,99.3 51.6,85.1 50.8,83.8 48.4,82.6 32.9,82.8 31.4,83.3 30.4,84.7 26.0,99.6 25.9,100.8 26.4,101.9 27.3,102.7 28.5,102.9Z M59.0,99.7 59.6,100.9 60.7,101.6 69.9,104.6 71.1,104.7 72.1,104.3 85.9,95.5 86.7,94.5 87.1,93.3 87.0,86.4 78.1,77.0 76.8,76.2 75.3,76.4 57.3,83.6 56.3,84.3 55.7,85.4 55.7,86.6Z M119.0,101.2 120.0,99.2 119.9,79.4 113.2,73.0 112.2,72.5 111.0,72.4 110.0,72.8 91.9,85.8 91.1,86.7 90.7,93.3 91.0,94.5 91.9,95.5 109.5,106.8 111.1,107.2 112.6,106.6Z M138.2,103.0 139.7,102.9 145.9,100.6 147.1,99.7 147.6,98.2 148.2,77.7 147.4,75.7 145.1,74.1 143.8,74.1 125.5,79.4 124.2,80.3 123.7,81.8 123.8,98.8 124.6,99.7 125.6,100.2Z M17.6,111.1 17.1,109.9 16.1,109.1 3.2,103.6 1.3,103.5 -4.1,105.5 -5.4,106.6 -5.8,108.2 -4.2,128.0 -3.8,129.3 -2.7,130.2 0.2,131.4 2.2,131.5 18.6,124.4 19.2,123.4 19.3,122.3Z M51.3,109.9 51.5,108.6 51.1,107.4 50.1,106.5 48.9,106.2 24.3,106.6 22.5,107.4 21.2,109.1 21.1,110.3 23.1,123.5 24.0,125.1 29.1,128.8 30.4,128.8 43.3,125.1 45.0,123.7Z M60.0,105.1 58.7,105.0 57.6,105.5 56.8,106.5 48.6,125.0 48.9,126.1 49.6,127.0 58.8,134.1 59.9,134.6 61.1,134.5 74.4,130.6 75.5,129.9 76.2,128.7 76.1,127.3 70.3,109.6 69.7,108.6Z M109.1,112.6 108.9,111.1 107.9,110.0 90.2,98.7 88.8,98.3 87.4,98.7 75.2,106.6 74.0,108.5 80.4,129.0 81.5,130.4 84.7,132.4 85.9,132.8 87.3,132.5 106.7,122.2 107.7,121.4 108.1,120.2Z M137.6,108.4 136.9,106.9 135.5,106.0 123.5,103.5 122.3,103.5 121.3,104.0 113.7,110.3 112.8,112.0 111.7,122.0 120.9,132.0 122.0,132.7 123.3,132.7 137.0,129.8 138.1,129.3 138.9,128.3 139.1,127.0Z M164.6,6.1 164.1,4.9 163.1,4.1 150.2,-1.4 148.3,-1.5 142.9,0.5 141.6,1.6 141.2,3.2 142.8,23.0 143.2,24.3 144.3,25.2 147.2,26.4 149.2,26.5 165.6,19.4 166.2,18.4 166.3,17.3Z M169.5,23.5 168.2,22.9 166.9,23.1 151.6,29.4 150.4,30.4 150.0,31.8 150.3,47.1 150.7,48.4 151.7,49.3 153.1,49.6 173.0,48.2 174.3,47.7 175.2,46.7 175.4,45.4 174.0,28.2 173.1,26.3Z M172.4,55.0 172.2,53.5 171.1,52.3 169.6,52.0 150.5,53.4 148.7,54.2 147.8,56.2 147.7,70.8 150.1,73.2 151.8,73.9 167.5,74.0 168.7,73.7 169.6,72.9 170.1,71.8Z M142.9,105.5 141.6,106.6 141.2,108.2 142.8,128.0 143.2,129.3 144.3,130.2 147.2,131.4 149.2,131.5 165.6,124.4 166.2,123.4 166.3,122.3 164.6,111.1 164.1,109.9 163.1,109.1 150.2,103.6 148.3,103.5Z" fill="none" stroke="#383838" stroke-opacity="0.45" stroke-width="2.6"/>
<path d="M-5.2,28.0 -6.8,27.8 -22.9,31.5 -23.7,32.4 -23.9,33.5 -24.1,43.5 -23.6,45.1 -22.2,46.0 -3.6,51.8 -2.4,51.8 -1.3,51.4 -0.5,50.4 -0.3,49.2 -0.6,31.7 -1.0,30.3 -2.1,29.4Z M-33.7,67.5 -32.9,68.9 -25.7,75.5 -24.6,76.2 -23.2,76.1 -5.0,70.9 -3.6,70.0 -3.1,68.4 -2.8,57.8 -3.3,56.2 -4.6,55.2 -23.7,49.3 -25.2,49.3 -26.4,50.1 -34.9,60.2Z M-23.3,81.8 -23.2,98.8 -22.4,99.7 -21.4,100.2 -8.8,103.0 -7.3,102.9 -1.1,100.6 0.1,99.7 0.6,98.2 1.2,77.7 0.4,75.7 -1.9,74.1 -3.2,74.1 -21.5,79.4 -22.8,80.3Z M4.2,-6.7 4.6,-5.2 5.8,-4.2 17.0,0.6 18.5,0.7 19.8,-0.0 21.1,-1.7 27.2,-21.9 27.2,-23.3 26.5,-24.5 24.3,-26.6 22.5,-27.4 7.4,-27.5 6.1,-27.2 5.2,-26.2 4.8,-25.0Z M26.0,-5.4 25.9,-4.2 26.4,-3.1 27.3,-2.3 28.5,-2.1 52.7,-2.5 54.1,-3.0 55.1,-4.2 55.2,-5.7 51.6,-19.9 50.2,-21.8 48.4,-22.4 32.9,-22.2 31.4,-21.7 30.4,-20.3Z M57.3,-21.4 56.3,-20.7 55.7,-19.6 55.7,-18.4 59.0,-5.3 59.6,-4.1 60.7,-3.4 71.1,-0.3 85.9,-9.5 86.7,-10.5 87.1,-11.7 87.0,-18.6 78.1,-28.0 76.8,-28.8 75.3,-28.6Z M90.7,-11.7 91.0,-10.5 91.9,-9.5 109.5,1.8 111.1,2.2 112.6,1.6 119.7,-4.7 119.9,-25.6 113.2,-32.0 112.2,-32.5 111.0,-32.6 110.0,-32.2 91.9,-19.2 91.1,-18.3 90.8,-17.2Z M147.6,-6.8 148.0,-28.4 146.2,-30.3 145.1,-30.9 143.8,-30.9 125.5,-25.6 124.2,-24.7 123.7,-23.2 123.6,-7.3 123.8,-6.2 124.6,-5.3 138.2,-2.0 139.7,-2.1 145.9,-4.4 147.1,-5.3Z M3.2,-1.4 1.3,-1.5 -4.1,0.5 -5.4,1.6 -5.8,3.2 -4.2,23.0 -3.8,24.3 -2.7,25.2 1.2,26.7 17.7,20.1 18.6,19.4 19.2,18.4 19.3,17.3 17.6,6.1 17.1,4.9 16.1,4.1Z M22.5,2.4 21.2,4.1 21.1,5.3 23.1,18.5 24.0,20.1 29.1,23.8 30.4,23.8 44.3,19.6 51.3,4.9 51.5,3.6 51.1,2.4 50.1,1.5 48.9,1.2 24.3,1.6Z M60.0,0.1 58.7,0.0 57.6,0.5 56.8,1.5 48.6,20.0 48.9,21.1 49.6,22.0 58.8,29.1 59.9,29.6 61.1,29.5 74.4,25.6 75.5,24.9 76.2,23.7 76.1,22.3 70.3,4.6 69.7,3.6Z M75.2,1.6 74.0,3.5 74.1,4.6 80.4,24.0 81.5,25.4 84.7,27.4 85.9,27.8 87.3,27.5 106.7,17.2 107.7,16.4 108.1,15.2 109.1,7.6 108.9,6.1 107.9,5.0 90.2,-6.3 88.8,-6.7 87.4,-6.3Z M120.9,27.0 122.0,27.7 123.3,27.7 137.0,24.8 138.1,24.3 138.9,23.3 139.1,22.0 137.6,3.4 136.9,1.9 135.5,1.0 122.3,-1.5 113.7,5.3 112.8,7.0 111.7,17.0Z M4.6,29.4 3.4,30.4 3.0,31.8 3.3,47.1 3.7,48.4 4.7,49.3 6.1,49.6 26.0,48.2 27.3,47.7 28.2,46.7 28.4,45.4 27.0,28.2 26.1,26.3 22.5,23.5 21.2,22.9 19.9,23.1Z M44.1,23.6 31.6,27.4 30.9,28.4 30.7,29.6 31.9,44.4 32.5,45.8 33.8,46.6 49.5,51.5 50.8,51.6 52.0,50.9 52.7,49.7 57.0,34.2 56.9,32.7 56.1,31.5 46.4,24.0 45.3,23.6Z M84.3,32.6 83.9,31.4 83.0,30.6 78.9,28.3 62.4,32.9 61.2,33.6 60.6,34.7 56.8,48.4 56.9,49.8 57.6,51.0 58.9,51.6 77.0,54.8 78.2,54.7 79.2,54.2 85.3,48.3 85.5,47.1Z M119.5,31.8 118.8,29.9 110.6,21.4 109.1,20.6 107.5,20.9 89.3,30.5 88.2,31.5 87.9,33.0 89.1,46.5 89.5,47.8 90.6,48.6 107.6,56.6 109.3,56.7 110.7,55.9 118.7,46.8 119.3,45.1Z M140.2,27.8 124.1,31.5 123.3,32.4 123.1,33.5 122.9,43.5 123.4,45.1 124.8,46.0 143.4,51.8 144.6,51.8 145.7,51.4 146.5,50.4 146.7,49.2 146.4,31.7 146.0,30.3 144.9,29.4 141.8,28.0Z M20.5,74.0 21.7,73.7 22.6,72.9 23.1,71.8 25.4,55.0 25.2,53.5 24.1,52.3 22.6,52.0 3.5,53.4 1.7,54.2 0.8,56.2 0.5,69.7 1.3,71.7 3.1,73.2 4.8,73.9Z M29.6,78.5 31.5,79.2 45.9,79.0 47.2,78.7 48.1,77.8 48.5,76.6 49.4,57.3 48.5,55.3 32.8,50.1 31.3,50.1 30.0,50.9 29.4,52.2 26.4,73.9 26.5,75.1 27.2,76.1Z M52.0,77.8 52.3,79.1 53.1,80.1 54.3,80.6 55.6,80.4 74.1,72.9 75.3,72.1 75.8,70.7 76.6,60.8 76.4,59.5 75.7,58.5 74.5,58.0 56.0,54.8 54.6,54.9 53.5,55.8 53.0,57.2Z M89.3,52.0 87.9,51.8 86.5,52.4 81.3,57.1 80.4,58.8 79.3,71.7 80.0,73.8 87.7,81.6 88.7,82.3 89.9,82.4 91.0,81.9 108.5,69.5 109.4,68.3 109.5,66.9 108.5,62.1 108.0,61.0 107.1,60.3Z M123.3,49.3 121.8,49.3 120.6,50.1 112.1,60.2 113.3,67.5 114.1,68.9 121.3,75.5 122.4,76.2 123.8,76.1 142.0,70.9 143.4,70.0 143.9,68.4 144.2,57.8 143.7,56.2 142.4,55.2Z M27.2,83.1 27.2,81.7 26.5,80.5 24.3,78.4 22.5,77.6 7.4,77.5 6.1,77.8 5.2,78.8 4.8,80.0 4.2,98.3 4.6,99.8 5.8,100.8 17.0,105.6 18.5,105.7 19.8,105.0 21.1,103.3Z M52.7,102.5 54.1,102.0 55.1,100.8 55.2,99.3 51.6,85.1 50.8,83.8 48.4,82.6 32.9,82.8 31.4,83.3 30.4,84.7 26.0,99.6 25.9,100.8 26.4,101.9 27.3,102.7 28.5,102.9Z M59.0,99.7 59.6,100.9 60.7,101.6 69.9,104.6 71.1,104.7 72.1,104.3 85.9,95.5 86.7,94.5 87.1,93.3 87.0,86.4 78.1,77.0 76.8,76.2 75.3,76.4 57.3,83.6 56.3,84.3 55.7,85.4 55.7,86.6Z M119.0,101.2 120.0,99.2 119.9,79.4 113.2,73.0 112.2,72.5 111.0,72.4 110.0,72.8 91.9,85.8 91.1,86.7 90.7,93.3 91.0,94.5 91.9,95.5 109.5,106.8 111.1,107.2 112.6,106.6Z M138.2,103.0 139.7,102.9 145.9,100.6 147.1,99.7 147.6,98.2 148.2,77.7 147.4,75.7 145.1,74.1 143.8,74.1 125.5,79.4 124.2,80.3 123.7,81.8 123.8,98.8 124.6,99.7 125.6,100.2Z M17.6,111.1 17.1,109.9 16.1,109.1 3.2,103.6 1.3,103.5 -4.1,105.5 -5.4,106.6 -5.8,108.2 -4.2,128.0 -3.8,129.3 -2.7,130.2 0.2,131.4 2.2,131.5 18.6,124.4 19.2,123.4 19.3,122.3Z M51.3,109.9 51.5,108.6 51.1,107.4 50.1,106.5 48.9,106.2 24.3,106.6 22.5,107.4 21.2,109.1 21.1,110.3 23.1,123.5 24.0,125.1 29.1,128.8 30.4,128.8 43.3,125.1 45.0,123.7Z M60.0,105.1 58.7,105.0 57.6,105.5 56.8,106.5 48.6,125.0 48.9,126.1 49.6,127.0 58.8,134.1 59.9,134.6 61.1,134.5 74.4,130.6 75.5,129.9 76.2,128.7 76.1,127.3 70.3,109.6 69.7,108.6Z M109.1,112.6 108.9,111.1 107.9,110.0 90.2,98.7 88.8,98.3 87.4,98.7 75.2,106.6 74.0,108.5 80.4,129.0 81.5,130.4 84.7,132.4 85.9,132.8 87.3,132.5 106.7,122.2 107.7,121.4 108.1,120.2Z M137.6,108.4 136.9,106.9 135.5,106.0 123.5,103.5 122.3,103.5 121.3,104.0 113.7,110.3 112.8,112.0 111.7,122.0 120.9,132.0 122.0,132.7 123.3,132.7 137.0,129.8 138.1,129.3 138.9,128.3 139.1,127.0Z M164.6,6.1 164.1,4.9 163.1,4.1 150.2,-1.4 148.3,-1.5 142.9,0.5 141.6,1.6 141.2,3.2 142.8,23.0 143.2,24.3 144.3,25.2 147.2,26.4 149.2,26.5 165.6,19.4 166.2,18.4 166.3,17.3Z M169.5,23.5 168.2,22.9 166.9,23.1 151.6,29.4 150.4,30.4 150.0,31.8 150.3,47.1 150.7,48.4 151.7,49.3 153.1,49.6 173.0,48.2 174.3,47.7 175.2,46.7 175.4,45.4 174.0,28.2 173.1,26.3Z M172.4,55.0 172.2,53.5 171.1,52.3 169.6,52.0 150.5,53.4 148.7,54.2 147.8,56.2 147.7,70.8 150.1,73.2 151.8,73.9 167.5,74.0 168.7,73.7 169.6,72.9 170.1,71.8Z M142.9,105.5 141.6,106.6 141.2,108.2 142.8,128.0 143.2,129.3 144.3,130.2 147.2,131.4 149.2,131.5 165.6,124.4 166.2,123.4 166.3,122.3 164.6,111.1 164.1,109.9 163.1,109.1 150.2,103.6 148.3,103.5Z" fill="#e2e2e2" stroke="#383838" stroke-width="1.1"/>
</pattern>
<pattern id="stb" patternUnits="userSpaceOnUse" width="147" height="105" x="66.7" y="266.3">
<rect width="147" height="105" fill="#b2d6f6"/>
<path d="M-5.2,28.0 -6.8,27.8 -22.9,31.5 -23.7,32.4 -23.9,33.5 -24.1,43.5 -23.6,45.1 -22.2,46.0 -3.6,51.8 -2.4,51.8 -1.3,51.4 -0.5,50.4 -0.3,49.2 -0.6,31.7 -1.0,30.3 -2.1,29.4Z M-33.7,67.5 -32.9,68.9 -25.7,75.5 -24.6,76.2 -23.2,76.1 -5.0,70.9 -3.6,70.0 -3.1,68.4 -2.8,57.8 -3.3,56.2 -4.6,55.2 -23.7,49.3 -25.2,49.3 -26.4,50.1 -34.9,60.2Z M-23.3,81.8 -23.2,98.8 -22.4,99.7 -21.4,100.2 -8.8,103.0 -7.3,102.9 -1.1,100.6 0.1,99.7 0.6,98.2 1.2,77.7 0.4,75.7 -1.9,74.1 -3.2,74.1 -21.5,79.4 -22.8,80.3Z M4.2,-6.7 4.6,-5.2 5.8,-4.2 17.0,0.6 18.5,0.7 19.8,-0.0 21.1,-1.7 27.2,-21.9 27.2,-23.3 26.5,-24.5 24.3,-26.6 22.5,-27.4 7.4,-27.5 6.1,-27.2 5.2,-26.2 4.8,-25.0Z M26.0,-5.4 25.9,-4.2 26.4,-3.1 27.3,-2.3 28.5,-2.1 52.7,-2.5 54.1,-3.0 55.1,-4.2 55.2,-5.7 51.6,-19.9 50.2,-21.8 48.4,-22.4 32.9,-22.2 31.4,-21.7 30.4,-20.3Z M57.3,-21.4 56.3,-20.7 55.7,-19.6 55.7,-18.4 59.0,-5.3 59.6,-4.1 60.7,-3.4 71.1,-0.3 85.9,-9.5 86.7,-10.5 87.1,-11.7 87.0,-18.6 78.1,-28.0 76.8,-28.8 75.3,-28.6Z M90.7,-11.7 91.0,-10.5 91.9,-9.5 109.5,1.8 111.1,2.2 112.6,1.6 119.7,-4.7 119.9,-25.6 113.2,-32.0 112.2,-32.5 111.0,-32.6 110.0,-32.2 91.9,-19.2 91.1,-18.3 90.8,-17.2Z M147.6,-6.8 148.0,-28.4 146.2,-30.3 145.1,-30.9 143.8,-30.9 125.5,-25.6 124.2,-24.7 123.7,-23.2 123.6,-7.3 123.8,-6.2 124.6,-5.3 138.2,-2.0 139.7,-2.1 145.9,-4.4 147.1,-5.3Z M3.2,-1.4 1.3,-1.5 -4.1,0.5 -5.4,1.6 -5.8,3.2 -4.2,23.0 -3.8,24.3 -2.7,25.2 1.2,26.7 17.7,20.1 18.6,19.4 19.2,18.4 19.3,17.3 17.6,6.1 17.1,4.9 16.1,4.1Z M22.5,2.4 21.2,4.1 21.1,5.3 23.1,18.5 24.0,20.1 29.1,23.8 30.4,23.8 44.3,19.6 51.3,4.9 51.5,3.6 51.1,2.4 50.1,1.5 48.9,1.2 24.3,1.6Z M60.0,0.1 58.7,0.0 57.6,0.5 56.8,1.5 48.6,20.0 48.9,21.1 49.6,22.0 58.8,29.1 59.9,29.6 61.1,29.5 74.4,25.6 75.5,24.9 76.2,23.7 76.1,22.3 70.3,4.6 69.7,3.6Z M75.2,1.6 74.0,3.5 74.1,4.6 80.4,24.0 81.5,25.4 84.7,27.4 85.9,27.8 87.3,27.5 106.7,17.2 107.7,16.4 108.1,15.2 109.1,7.6 108.9,6.1 107.9,5.0 90.2,-6.3 88.8,-6.7 87.4,-6.3Z M120.9,27.0 122.0,27.7 123.3,27.7 137.0,24.8 138.1,24.3 138.9,23.3 139.1,22.0 137.6,3.4 136.9,1.9 135.5,1.0 122.3,-1.5 113.7,5.3 112.8,7.0 111.7,17.0Z M4.6,29.4 3.4,30.4 3.0,31.8 3.3,47.1 3.7,48.4 4.7,49.3 6.1,49.6 26.0,48.2 27.3,47.7 28.2,46.7 28.4,45.4 27.0,28.2 26.1,26.3 22.5,23.5 21.2,22.9 19.9,23.1Z M44.1,23.6 31.6,27.4 30.9,28.4 30.7,29.6 31.9,44.4 32.5,45.8 33.8,46.6 49.5,51.5 50.8,51.6 52.0,50.9 52.7,49.7 57.0,34.2 56.9,32.7 56.1,31.5 46.4,24.0 45.3,23.6Z M84.3,32.6 83.9,31.4 83.0,30.6 78.9,28.3 62.4,32.9 61.2,33.6 60.6,34.7 56.8,48.4 56.9,49.8 57.6,51.0 58.9,51.6 77.0,54.8 78.2,54.7 79.2,54.2 85.3,48.3 85.5,47.1Z M119.5,31.8 118.8,29.9 110.6,21.4 109.1,20.6 107.5,20.9 89.3,30.5 88.2,31.5 87.9,33.0 89.1,46.5 89.5,47.8 90.6,48.6 107.6,56.6 109.3,56.7 110.7,55.9 118.7,46.8 119.3,45.1Z M140.2,27.8 124.1,31.5 123.3,32.4 123.1,33.5 122.9,43.5 123.4,45.1 124.8,46.0 143.4,51.8 144.6,51.8 145.7,51.4 146.5,50.4 146.7,49.2 146.4,31.7 146.0,30.3 144.9,29.4 141.8,28.0Z M20.5,74.0 21.7,73.7 22.6,72.9 23.1,71.8 25.4,55.0 25.2,53.5 24.1,52.3 22.6,52.0 3.5,53.4 1.7,54.2 0.8,56.2 0.5,69.7 1.3,71.7 3.1,73.2 4.8,73.9Z M29.6,78.5 31.5,79.2 45.9,79.0 47.2,78.7 48.1,77.8 48.5,76.6 49.4,57.3 48.5,55.3 32.8,50.1 31.3,50.1 30.0,50.9 29.4,52.2 26.4,73.9 26.5,75.1 27.2,76.1Z M52.0,77.8 52.3,79.1 53.1,80.1 54.3,80.6 55.6,80.4 74.1,72.9 75.3,72.1 75.8,70.7 76.6,60.8 76.4,59.5 75.7,58.5 74.5,58.0 56.0,54.8 54.6,54.9 53.5,55.8 53.0,57.2Z M89.3,52.0 87.9,51.8 86.5,52.4 81.3,57.1 80.4,58.8 79.3,71.7 80.0,73.8 87.7,81.6 88.7,82.3 89.9,82.4 91.0,81.9 108.5,69.5 109.4,68.3 109.5,66.9 108.5,62.1 108.0,61.0 107.1,60.3Z M123.3,49.3 121.8,49.3 120.6,50.1 112.1,60.2 113.3,67.5 114.1,68.9 121.3,75.5 122.4,76.2 123.8,76.1 142.0,70.9 143.4,70.0 143.9,68.4 144.2,57.8 143.7,56.2 142.4,55.2Z M27.2,83.1 27.2,81.7 26.5,80.5 24.3,78.4 22.5,77.6 7.4,77.5 6.1,77.8 5.2,78.8 4.8,80.0 4.2,98.3 4.6,99.8 5.8,100.8 17.0,105.6 18.5,105.7 19.8,105.0 21.1,103.3Z M52.7,102.5 54.1,102.0 55.1,100.8 55.2,99.3 51.6,85.1 50.8,83.8 48.4,82.6 32.9,82.8 31.4,83.3 30.4,84.7 26.0,99.6 25.9,100.8 26.4,101.9 27.3,102.7 28.5,102.9Z M59.0,99.7 59.6,100.9 60.7,101.6 69.9,104.6 71.1,104.7 72.1,104.3 85.9,95.5 86.7,94.5 87.1,93.3 87.0,86.4 78.1,77.0 76.8,76.2 75.3,76.4 57.3,83.6 56.3,84.3 55.7,85.4 55.7,86.6Z M119.0,101.2 120.0,99.2 119.9,79.4 113.2,73.0 112.2,72.5 111.0,72.4 110.0,72.8 91.9,85.8 91.1,86.7 90.7,93.3 91.0,94.5 91.9,95.5 109.5,106.8 111.1,107.2 112.6,106.6Z M138.2,103.0 139.7,102.9 145.9,100.6 147.1,99.7 147.6,98.2 148.2,77.7 147.4,75.7 145.1,74.1 143.8,74.1 125.5,79.4 124.2,80.3 123.7,81.8 123.8,98.8 124.6,99.7 125.6,100.2Z M17.6,111.1 17.1,109.9 16.1,109.1 3.2,103.6 1.3,103.5 -4.1,105.5 -5.4,106.6 -5.8,108.2 -4.2,128.0 -3.8,129.3 -2.7,130.2 0.2,131.4 2.2,131.5 18.6,124.4 19.2,123.4 19.3,122.3Z M51.3,109.9 51.5,108.6 51.1,107.4 50.1,106.5 48.9,106.2 24.3,106.6 22.5,107.4 21.2,109.1 21.1,110.3 23.1,123.5 24.0,125.1 29.1,128.8 30.4,128.8 43.3,125.1 45.0,123.7Z M60.0,105.1 58.7,105.0 57.6,105.5 56.8,106.5 48.6,125.0 48.9,126.1 49.6,127.0 58.8,134.1 59.9,134.6 61.1,134.5 74.4,130.6 75.5,129.9 76.2,128.7 76.1,127.3 70.3,109.6 69.7,108.6Z M109.1,112.6 108.9,111.1 107.9,110.0 90.2,98.7 88.8,98.3 87.4,98.7 75.2,106.6 74.0,108.5 80.4,129.0 81.5,130.4 84.7,132.4 85.9,132.8 87.3,132.5 106.7,122.2 107.7,121.4 108.1,120.2Z M137.6,108.4 136.9,106.9 135.5,106.0 123.5,103.5 122.3,103.5 121.3,104.0 113.7,110.3 112.8,112.0 111.7,122.0 120.9,132.0 122.0,132.7 123.3,132.7 137.0,129.8 138.1,129.3 138.9,128.3 139.1,127.0Z M164.6,6.1 164.1,4.9 163.1,4.1 150.2,-1.4 148.3,-1.5 142.9,0.5 141.6,1.6 141.2,3.2 142.8,23.0 143.2,24.3 144.3,25.2 147.2,26.4 149.2,26.5 165.6,19.4 166.2,18.4 166.3,17.3Z M169.5,23.5 168.2,22.9 166.9,23.1 151.6,29.4 150.4,30.4 150.0,31.8 150.3,47.1 150.7,48.4 151.7,49.3 153.1,49.6 173.0,48.2 174.3,47.7 175.2,46.7 175.4,45.4 174.0,28.2 173.1,26.3Z M172.4,55.0 172.2,53.5 171.1,52.3 169.6,52.0 150.5,53.4 148.7,54.2 147.8,56.2 147.7,70.8 150.1,73.2 151.8,73.9 167.5,74.0 168.7,73.7 169.6,72.9 170.1,71.8Z M142.9,105.5 141.6,106.6 141.2,108.2 142.8,128.0 143.2,129.3 144.3,130.2 147.2,131.4 149.2,131.5 165.6,124.4 166.2,123.4 166.3,122.3 164.6,111.1 164.1,109.9 163.1,109.1 150.2,103.6 148.3,103.5Z" fill="none" stroke="#1c2c48" stroke-opacity="0.45" stroke-width="2.6"/>
<path d="M-5.2,28.0 -6.8,27.8 -22.9,31.5 -23.7,32.4 -23.9,33.5 -24.1,43.5 -23.6,45.1 -22.2,46.0 -3.6,51.8 -2.4,51.8 -1.3,51.4 -0.5,50.4 -0.3,49.2 -0.6,31.7 -1.0,30.3 -2.1,29.4Z M-33.7,67.5 -32.9,68.9 -25.7,75.5 -24.6,76.2 -23.2,76.1 -5.0,70.9 -3.6,70.0 -3.1,68.4 -2.8,57.8 -3.3,56.2 -4.6,55.2 -23.7,49.3 -25.2,49.3 -26.4,50.1 -34.9,60.2Z M-23.3,81.8 -23.2,98.8 -22.4,99.7 -21.4,100.2 -8.8,103.0 -7.3,102.9 -1.1,100.6 0.1,99.7 0.6,98.2 1.2,77.7 0.4,75.7 -1.9,74.1 -3.2,74.1 -21.5,79.4 -22.8,80.3Z M4.2,-6.7 4.6,-5.2 5.8,-4.2 17.0,0.6 18.5,0.7 19.8,-0.0 21.1,-1.7 27.2,-21.9 27.2,-23.3 26.5,-24.5 24.3,-26.6 22.5,-27.4 7.4,-27.5 6.1,-27.2 5.2,-26.2 4.8,-25.0Z M26.0,-5.4 25.9,-4.2 26.4,-3.1 27.3,-2.3 28.5,-2.1 52.7,-2.5 54.1,-3.0 55.1,-4.2 55.2,-5.7 51.6,-19.9 50.2,-21.8 48.4,-22.4 32.9,-22.2 31.4,-21.7 30.4,-20.3Z M57.3,-21.4 56.3,-20.7 55.7,-19.6 55.7,-18.4 59.0,-5.3 59.6,-4.1 60.7,-3.4 71.1,-0.3 85.9,-9.5 86.7,-10.5 87.1,-11.7 87.0,-18.6 78.1,-28.0 76.8,-28.8 75.3,-28.6Z M90.7,-11.7 91.0,-10.5 91.9,-9.5 109.5,1.8 111.1,2.2 112.6,1.6 119.7,-4.7 119.9,-25.6 113.2,-32.0 112.2,-32.5 111.0,-32.6 110.0,-32.2 91.9,-19.2 91.1,-18.3 90.8,-17.2Z M147.6,-6.8 148.0,-28.4 146.2,-30.3 145.1,-30.9 143.8,-30.9 125.5,-25.6 124.2,-24.7 123.7,-23.2 123.6,-7.3 123.8,-6.2 124.6,-5.3 138.2,-2.0 139.7,-2.1 145.9,-4.4 147.1,-5.3Z M3.2,-1.4 1.3,-1.5 -4.1,0.5 -5.4,1.6 -5.8,3.2 -4.2,23.0 -3.8,24.3 -2.7,25.2 1.2,26.7 17.7,20.1 18.6,19.4 19.2,18.4 19.3,17.3 17.6,6.1 17.1,4.9 16.1,4.1Z M22.5,2.4 21.2,4.1 21.1,5.3 23.1,18.5 24.0,20.1 29.1,23.8 30.4,23.8 44.3,19.6 51.3,4.9 51.5,3.6 51.1,2.4 50.1,1.5 48.9,1.2 24.3,1.6Z M60.0,0.1 58.7,0.0 57.6,0.5 56.8,1.5 48.6,20.0 48.9,21.1 49.6,22.0 58.8,29.1 59.9,29.6 61.1,29.5 74.4,25.6 75.5,24.9 76.2,23.7 76.1,22.3 70.3,4.6 69.7,3.6Z M75.2,1.6 74.0,3.5 74.1,4.6 80.4,24.0 81.5,25.4 84.7,27.4 85.9,27.8 87.3,27.5 106.7,17.2 107.7,16.4 108.1,15.2 109.1,7.6 108.9,6.1 107.9,5.0 90.2,-6.3 88.8,-6.7 87.4,-6.3Z M120.9,27.0 122.0,27.7 123.3,27.7 137.0,24.8 138.1,24.3 138.9,23.3 139.1,22.0 137.6,3.4 136.9,1.9 135.5,1.0 122.3,-1.5 113.7,5.3 112.8,7.0 111.7,17.0Z M4.6,29.4 3.4,30.4 3.0,31.8 3.3,47.1 3.7,48.4 4.7,49.3 6.1,49.6 26.0,48.2 27.3,47.7 28.2,46.7 28.4,45.4 27.0,28.2 26.1,26.3 22.5,23.5 21.2,22.9 19.9,23.1Z M44.1,23.6 31.6,27.4 30.9,28.4 30.7,29.6 31.9,44.4 32.5,45.8 33.8,46.6 49.5,51.5 50.8,51.6 52.0,50.9 52.7,49.7 57.0,34.2 56.9,32.7 56.1,31.5 46.4,24.0 45.3,23.6Z M84.3,32.6 83.9,31.4 83.0,30.6 78.9,28.3 62.4,32.9 61.2,33.6 60.6,34.7 56.8,48.4 56.9,49.8 57.6,51.0 58.9,51.6 77.0,54.8 78.2,54.7 79.2,54.2 85.3,48.3 85.5,47.1Z M119.5,31.8 118.8,29.9 110.6,21.4 109.1,20.6 107.5,20.9 89.3,30.5 88.2,31.5 87.9,33.0 89.1,46.5 89.5,47.8 90.6,48.6 107.6,56.6 109.3,56.7 110.7,55.9 118.7,46.8 119.3,45.1Z M140.2,27.8 124.1,31.5 123.3,32.4 123.1,33.5 122.9,43.5 123.4,45.1 124.8,46.0 143.4,51.8 144.6,51.8 145.7,51.4 146.5,50.4 146.7,49.2 146.4,31.7 146.0,30.3 144.9,29.4 141.8,28.0Z M20.5,74.0 21.7,73.7 22.6,72.9 23.1,71.8 25.4,55.0 25.2,53.5 24.1,52.3 22.6,52.0 3.5,53.4 1.7,54.2 0.8,56.2 0.5,69.7 1.3,71.7 3.1,73.2 4.8,73.9Z M29.6,78.5 31.5,79.2 45.9,79.0 47.2,78.7 48.1,77.8 48.5,76.6 49.4,57.3 48.5,55.3 32.8,50.1 31.3,50.1 30.0,50.9 29.4,52.2 26.4,73.9 26.5,75.1 27.2,76.1Z M52.0,77.8 52.3,79.1 53.1,80.1 54.3,80.6 55.6,80.4 74.1,72.9 75.3,72.1 75.8,70.7 76.6,60.8 76.4,59.5 75.7,58.5 74.5,58.0 56.0,54.8 54.6,54.9 53.5,55.8 53.0,57.2Z M89.3,52.0 87.9,51.8 86.5,52.4 81.3,57.1 80.4,58.8 79.3,71.7 80.0,73.8 87.7,81.6 88.7,82.3 89.9,82.4 91.0,81.9 108.5,69.5 109.4,68.3 109.5,66.9 108.5,62.1 108.0,61.0 107.1,60.3Z M123.3,49.3 121.8,49.3 120.6,50.1 112.1,60.2 113.3,67.5 114.1,68.9 121.3,75.5 122.4,76.2 123.8,76.1 142.0,70.9 143.4,70.0 143.9,68.4 144.2,57.8 143.7,56.2 142.4,55.2Z M27.2,83.1 27.2,81.7 26.5,80.5 24.3,78.4 22.5,77.6 7.4,77.5 6.1,77.8 5.2,78.8 4.8,80.0 4.2,98.3 4.6,99.8 5.8,100.8 17.0,105.6 18.5,105.7 19.8,105.0 21.1,103.3Z M52.7,102.5 54.1,102.0 55.1,100.8 55.2,99.3 51.6,85.1 50.8,83.8 48.4,82.6 32.9,82.8 31.4,83.3 30.4,84.7 26.0,99.6 25.9,100.8 26.4,101.9 27.3,102.7 28.5,102.9Z M59.0,99.7 59.6,100.9 60.7,101.6 69.9,104.6 71.1,104.7 72.1,104.3 85.9,95.5 86.7,94.5 87.1,93.3 87.0,86.4 78.1,77.0 76.8,76.2 75.3,76.4 57.3,83.6 56.3,84.3 55.7,85.4 55.7,86.6Z M119.0,101.2 120.0,99.2 119.9,79.4 113.2,73.0 112.2,72.5 111.0,72.4 110.0,72.8 91.9,85.8 91.1,86.7 90.7,93.3 91.0,94.5 91.9,95.5 109.5,106.8 111.1,107.2 112.6,106.6Z M138.2,103.0 139.7,102.9 145.9,100.6 147.1,99.7 147.6,98.2 148.2,77.7 147.4,75.7 145.1,74.1 143.8,74.1 125.5,79.4 124.2,80.3 123.7,81.8 123.8,98.8 124.6,99.7 125.6,100.2Z M17.6,111.1 17.1,109.9 16.1,109.1 3.2,103.6 1.3,103.5 -4.1,105.5 -5.4,106.6 -5.8,108.2 -4.2,128.0 -3.8,129.3 -2.7,130.2 0.2,131.4 2.2,131.5 18.6,124.4 19.2,123.4 19.3,122.3Z M51.3,109.9 51.5,108.6 51.1,107.4 50.1,106.5 48.9,106.2 24.3,106.6 22.5,107.4 21.2,109.1 21.1,110.3 23.1,123.5 24.0,125.1 29.1,128.8 30.4,128.8 43.3,125.1 45.0,123.7Z M60.0,105.1 58.7,105.0 57.6,105.5 56.8,106.5 48.6,125.0 48.9,126.1 49.6,127.0 58.8,134.1 59.9,134.6 61.1,134.5 74.4,130.6 75.5,129.9 76.2,128.7 76.1,127.3 70.3,109.6 69.7,108.6Z M109.1,112.6 108.9,111.1 107.9,110.0 90.2,98.7 88.8,98.3 87.4,98.7 75.2,106.6 74.0,108.5 80.4,129.0 81.5,130.4 84.7,132.4 85.9,132.8 87.3,132.5 106.7,122.2 107.7,121.4 108.1,120.2Z M137.6,108.4 136.9,106.9 135.5,106.0 123.5,103.5 122.3,103.5 121.3,104.0 113.7,110.3 112.8,112.0 111.7,122.0 120.9,132.0 122.0,132.7 123.3,132.7 137.0,129.8 138.1,129.3 138.9,128.3 139.1,127.0Z M164.6,6.1 164.1,4.9 163.1,4.1 150.2,-1.4 148.3,-1.5 142.9,0.5 141.6,1.6 141.2,3.2 142.8,23.0 143.2,24.3 144.3,25.2 147.2,26.4 149.2,26.5 165.6,19.4 166.2,18.4 166.3,17.3Z M169.5,23.5 168.2,22.9 166.9,23.1 151.6,29.4 150.4,30.4 150.0,31.8 150.3,47.1 150.7,48.4 151.7,49.3 153.1,49.6 173.0,48.2 174.3,47.7 175.2,46.7 175.4,45.4 174.0,28.2 173.1,26.3Z M172.4,55.0 172.2,53.5 171.1,52.3 169.6,52.0 150.5,53.4 148.7,54.2 147.8,56.2 147.7,70.8 150.1,73.2 151.8,73.9 167.5,74.0 168.7,73.7 169.6,72.9 170.1,71.8Z M142.9,105.5 141.6,106.6 141.2,108.2 142.8,128.0 143.2,129.3 144.3,130.2 147.2,131.4 149.2,131.5 165.6,124.4 166.2,123.4 166.3,122.3 164.6,111.1 164.1,109.9 163.1,109.1 150.2,103.6 148.3,103.5Z" fill="#b2d6f6" stroke="#1c2c48" stroke-width="1.1"/>
</pattern>
<pattern id="ora" patternUnits="userSpaceOnUse" width="61" height="30" x="0" y="0" patternTransform="translate(436.5,272.2) scale(0.9934,0.9767)">
<rect width="61" height="30" fill="#ed6a42"/>
<path d="M-61,-15.15 L-84.5,-15.15 C-77.5,-15.15 -72.5,-30 -65.5,-30 L-56.5,-30 C-49.5,-30 -44.5,-15.15 -37.5,-15.15 L-23.5,-15.15 C-16.5,-15.15 -11.5,-30 -4.5,-30 L4.5,-30 C11.5,-30 16.5,-15.15 23.5,-15.15 L37.5,-15.15 C44.5,-15.15 49.5,-30 56.5,-30 L65.5,-30 C72.5,-30 77.5,-15.15 84.5,-15.15 L101.5,-15.15M-61,-0.15000000000000036 L-84.5,-0.15000000000000036 C-77.5,-0.15000000000000036 -72.5,-15 -65.5,-15 L-56.5,-15 C-49.5,-15 -44.5,-0.15000000000000036 -37.5,-0.15000000000000036 L-23.5,-0.15000000000000036 C-16.5,-0.15000000000000036 -11.5,-15 -4.5,-15 L4.5,-15 C11.5,-15 16.5,-0.15000000000000036 23.5,-0.15000000000000036 L37.5,-0.15000000000000036 C44.5,-0.15000000000000036 49.5,-15 56.5,-15 L65.5,-15 C72.5,-15 77.5,-0.15000000000000036 84.5,-0.15000000000000036 L101.5,-0.15000000000000036M-61,14.85 L-84.5,14.85 C-77.5,14.85 -72.5,0 -65.5,0 L-56.5,0 C-49.5,0 -44.5,14.85 -37.5,14.85 L-23.5,14.85 C-16.5,14.85 -11.5,0 -4.5,0 L4.5,0 C11.5,0 16.5,14.85 23.5,14.85 L37.5,14.85 C44.5,14.85 49.5,0 56.5,0 L65.5,0 C72.5,0 77.5,14.85 84.5,14.85 L101.5,14.85M-61,29.85 L-84.5,29.85 C-77.5,29.85 -72.5,15 -65.5,15 L-56.5,15 C-49.5,15 -44.5,29.85 -37.5,29.85 L-23.5,29.85 C-16.5,29.85 -11.5,15 -4.5,15 L4.5,15 C11.5,15 16.5,29.85 23.5,29.85 L37.5,29.85 C44.5,29.85 49.5,15 56.5,15 L65.5,15 C72.5,15 77.5,29.85 84.5,29.85 L101.5,29.85M-61,44.85 L-84.5,44.85 C-77.5,44.85 -72.5,30 -65.5,30 L-56.5,30 C-49.5,30 -44.5,44.85 -37.5,44.85 L-23.5,44.85 C-16.5,44.85 -11.5,30 -4.5,30 L4.5,30 C11.5,30 16.5,44.85 23.5,44.85 L37.5,44.85 C44.5,44.85 49.5,30 56.5,30 L65.5,30 C72.5,30 77.5,44.85 84.5,44.85 L101.5,44.85M-61,59.85 L-84.5,59.85 C-77.5,59.85 -72.5,45 -65.5,45 L-56.5,45 C-49.5,45 -44.5,59.85 -37.5,59.85 L-23.5,59.85 C-16.5,59.85 -11.5,45 -4.5,45 L4.5,45 C11.5,45 16.5,59.85 23.5,59.85 L37.5,59.85 C44.5,59.85 49.5,45 56.5,45 L65.5,45 C72.5,45 77.5,59.85 84.5,59.85 L101.5,59.85" fill="none" stroke="#f7cdb8" stroke-width="2.0"/>
<g fill="#f8d2be"><rect x="0.0" y="3.8" width="1.4" height="1.4"/><rect x="3.0" y="3.8" width="1.4" height="1.4"/><rect x="6.0" y="4.1" width="1.4" height="1.4"/><rect x="12.0" y="8.9" width="1.4" height="1.4"/><rect x="18.0" y="15.6" width="1.4" height="1.4"/><rect x="21.0" y="17.9" width="1.4" height="1.4"/><rect x="27.0" y="18.6" width="1.4" height="1.4"/><rect x="33.0" y="18.6" width="1.4" height="1.4"/><rect x="36.0" y="18.6" width="1.4" height="1.4"/><rect x="39.0" y="18.4" width="1.4" height="1.4"/><rect x="42.0" y="16.5" width="1.4" height="1.4"/><rect x="45.0" y="13.5" width="1.4" height="1.4"/><rect x="48.0" y="10.1" width="1.4" height="1.4"/><rect x="51.0" y="6.8" width="1.4" height="1.4"/><rect x="54.0" y="4.5" width="1.4" height="1.4"/><rect x="60.0" y="3.8" width="1.4" height="1.4"/><rect x="1.5" y="7.5" width="1.4" height="1.4"/><rect x="4.5" y="7.5" width="1.4" height="1.4"/><rect x="7.5" y="8.5" width="1.4" height="1.4"/><rect x="10.5" y="11.0" width="1.4" height="1.4"/><rect x="13.5" y="14.3" width="1.4" height="1.4"/><rect x="16.5" y="17.8" width="1.4" height="1.4"/><rect x="19.5" y="20.7" width="1.4" height="1.4"/><rect x="22.5" y="22.2" width="1.4" height="1.4"/><rect x="25.5" y="22.3" width="1.4" height="1.4"/><rect x="31.5" y="22.3" width="1.4" height="1.4"/><rect x="34.5" y="22.3" width="1.4" height="1.4"/><rect x="40.5" y="21.4" width="1.4" height="1.4"/><rect x="43.5" y="18.8" width="1.4" height="1.4"/><rect x="46.5" y="15.5" width="1.4" height="1.4"/><rect x="52.5" y="9.2" width="1.4" height="1.4"/><rect x="58.5" y="7.5" width="1.4" height="1.4"/><rect x="61.5" y="7.5" width="1.4" height="1.4"/><rect x="0.0" y="11.2" width="1.4" height="1.4"/><rect x="3.0" y="11.2" width="1.4" height="1.4"/><rect x="6.0" y="11.5" width="1.4" height="1.4"/><rect x="9.0" y="13.3" width="1.4" height="1.4"/><rect x="12.0" y="16.3" width="1.4" height="1.4"/><rect x="15.0" y="19.8" width="1.4" height="1.4"/><rect x="18.0" y="23.0" width="1.4" height="1.4"/><rect x="21.0" y="25.3" width="1.4" height="1.4"/><rect x="24.0" y="26.0" width="1.4" height="1.4"/><rect x="27.0" y="26.0" width="1.4" height="1.4"/><rect x="30.0" y="26.0" width="1.4" height="1.4"/><rect x="33.0" y="26.0" width="1.4" height="1.4"/><rect x="36.0" y="26.0" width="1.4" height="1.4"/><rect x="39.0" y="25.8" width="1.4" height="1.4"/><rect x="42.0" y="23.9" width="1.4" height="1.4"/><rect x="45.0" y="20.9" width="1.4" height="1.4"/><rect x="51.0" y="14.2" width="1.4" height="1.4"/><rect x="54.0" y="11.9" width="1.4" height="1.4"/><rect x="57.0" y="11.2" width="1.4" height="1.4"/><rect x="60.0" y="11.2" width="1.4" height="1.4"/></g>
</pattern>
<pattern id="yel" patternUnits="userSpaceOnUse" width="47" height="62" x="600" y="600">
<rect width="47" height="62" fill="#ffff2e"/><g fill="#88823e"><rect x="15.2" y="9.9" width="1.2" height="1.2"/><rect x="4.2" y="32.6" width="2.2" height="1"/><rect x="26.6" y="54.7" width="1.2" height="1.2"/><rect x="2.6" y="26.6" width="1.2" height="1.2"/><rect x="11.6" y="33.5" width="1.2" height="1.2"/><rect x="37.4" y="8.3" width="1.2" height="1.2"/><rect x="28.7" y="35.4" width="1.2" height="1.2"/><rect x="26.4" y="24.4" width="1.2" height="1.2"/><rect x="3.0" y="51.6" width="2.2" height="1"/><path d="M19.4,32.9 l1,0 l1,1 l0,1 l-1,0z"/><rect x="14.6" y="49.2" width="1.2" height="1.2"/><rect x="5.5" y="34.7" width="1.2" height="1.2"/><rect x="17.4" y="33.3" width="1.2" height="1.2"/><rect x="25.8" y="37.5" width="1" height="2.2"/><rect x="30.9" y="26.2" width="2.2" height="1"/><rect x="21.5" y="55.5" width="2.2" height="1"/><rect x="14.2" y="47.9" width="1.2" height="1.2"/><rect x="4.6" y="18.7" width="1" height="2.2"/><rect x="39.5" y="44.0" width="2.2" height="1"/><path d="M27.8,5.3 l1,0 l1,1 l0,1 l-1,0z"/><rect x="19.4" y="45.7" width="1.2" height="1.2"/><rect x="42.1" y="25.9" width="1.2" height="1.2"/><rect x="34.6" y="34.8" width="2.2" height="1"/><rect x="16.0" y="21.7" width="1" height="2.2"/><rect x="26.5" y="27.9" width="1.2" height="1.2"/><rect x="42.6" y="29.0" width="1.2" height="1.2"/><path d="M3.7,42.4 l1,0 l1,1 l0,1 l-1,0z"/><rect x="44.7" y="49.5" width="2.2" height="1"/><rect x="32.5" y="53.3" width="2.2" height="1"/><rect x="2.0" y="28.2" width="1.2" height="1.2"/><rect x="27.9" y="30.1" width="1.2" height="1.2"/><rect x="34.8" y="8.6" width="1.2" height="1.2"/><rect x="18.5" y="55.1" width="1" height="2.2"/><path d="M4.5,27.5 l1,0 l1,1 l0,1 l-1,0z"/><path d="M23,12 h4 v4 h-1.2 v-2.8 h-2.8z M23.5,12.5 h2 v1.5 h-2z"/><path d="M23,42 h4 v4 h-1.2 v-2.8 h-2.8z M23.5,42.5 h2 v1.5 h-2z"/><path d="M41,4.2 Q42,1.2 45,3 L45.2,4.6Z"/><path d="M41,35.2 Q42,32.2 45,34 L45.2,35.6Z"/><path d="M12,28.2 Q13,25.2 16,27 L16.2,28.6Z"/><path d="M12,58.2 Q13,55.2 16,57 L16.2,58.6Z"/></g>
</pattern>
<pattern id="grn" patternUnits="userSpaceOnUse" width="64" height="47" x="600" y="800">
<rect width="64" height="47" fill="#53d83f"/><g fill="#529a52"><rect x="29.2" y="17.4" width="1.2" height="1.2"/><rect x="12.4" y="30.8" width="2.2" height="1"/><rect x="31.7" y="40.5" width="1.2" height="1.2"/><rect x="21.4" y="42.2" width="1.2" height="1.2"/><rect x="45.4" y="8.5" width="1" height="2.2"/><rect x="59.0" y="19.6" width="1.2" height="1.2"/><path d="M15.5,5.9 l1,0 l1,1 l0,1 l-1,0z"/><rect x="54.2" y="44.6" width="1.2" height="1.2"/><rect x="48.2" y="17.9" width="1.2" height="1.2"/><rect x="57.1" y="10.0" width="1.2" height="1.2"/><rect x="45.3" y="19.6" width="1.2" height="1.2"/><rect x="48.1" y="41.1" width="1" height="2.2"/><rect x="18.2" y="36.6" width="1.2" height="1.2"/><rect x="44.2" y="1.2" width="1" height="2.2"/><rect x="4.3" y="17.7" width="1" height="2.2"/><rect x="9.5" y="11.4" width="1.2" height="1.2"/><path d="M59.8,1.2 l1,0 l1,1 l0,1 l-1,0z"/><rect x="13.1" y="38.5" width="2.2" height="1"/><path d="M1.5,4.7 l1,0 l1,1 l0,1 l-1,0z"/><path d="M57.0,23.0 l1,0 l1,1 l0,1 l-1,0z"/><rect x="31.3" y="41.5" width="1" height="2.2"/><rect x="5.2" y="9.5" width="1.2" height="1.2"/><path d="M43.8,7.4 l1,0 l1,1 l0,1 l-1,0z"/><rect x="44.9" y="2.8" width="2.2" height="1"/><rect x="34.9" y="27.7" width="1.2" height="1.2"/><path d="M46.5,33.4 l1,0 l1,1 l0,1 l-1,0z"/><path d="M41,19 h4 v4 h-1.2 v-2.8 h-2.8z M41.5,19.5 h2 v1.5 h-2z"/><path d="M9,6.2 Q10,3.2 13,5 L13.2,6.6Z"/><path d="M56,6.2 Q57,3.2 60,5 L60.2,6.6Z"/><path d="M10,34.2 Q11,31.2 14,33 L14.2,34.6Z"/><path d="M57,34.2 Q58,31.2 61,33 L61.2,34.6Z"/><path d="M28,42 h4 v4 h-1.2 v-2.8 h-2.8z M28.5,42.5 h2 v1.5 h-2z"/></g>
</pattern>
<linearGradient id="fnd" x1="0" y1="0" x2="0" y2="1"><stop offset="0" stop-color="#787878"/><stop offset="1" stop-color="#bcb8b8"/></linearGradient>
<clipPath id="cv"><rect x="17" y="88.7" width="903" height="856.3"/></clipPath></defs>
<g clip-path="url(#cv)">
<rect x="17" y="88" width="903" height="857" fill="#fff"/>
<polygon points="-273.4,887.4 66.7,814.5 381.7,814.5 381.7,797.6 925.0,751.2 925.0,950.0 -273.4,950.0" fill="url(#grn)"/>
<polygon points="276.7,570.6 925.0,457.5 925.0,751.2 381.7,797.6 381.7,686.3 329.2,686.3 329.2,581.3 276.7,581.3" fill="url(#yel)"/>
<polygon points="224.2,266.3 715.0,213.2 925.0,102.5 925.0,457.5 276.7,570.6 276.7,371.3 224.2,371.3" fill="url(#ora)"/>
<rect x="119.2" y="266.3" width="105.0" height="105.0" fill="url(#stb)" stroke="#111" stroke-width="1.1"/>
<rect x="119.2" y="371.3" width="157.5" height="105.0" fill="url(#stg)" stroke="#111" stroke-width="1.1"/>
<rect x="66.7" y="476.3" width="210.0" height="105.0" fill="url(#stg)" stroke="#111" stroke-width="1.1"/>
<rect x="66.7" y="581.3" width="262.5" height="105.0" fill="url(#stg)" stroke="#111" stroke-width="1.1"/>
<rect x="66.7" y="686.3" width="315.0" height="105.0" fill="url(#stg)" stroke="#111" stroke-width="1.1"/>
<rect x="66.7" y="791.3" width="315.0" height="52.5" fill="url(#fnd)" stroke="#000" stroke-width="1.2"/>
</g>
<g font-family="Liberation Sans, sans-serif">
<rect x="20.5" y="92.5" width="25" height="25" fill="#cde4f7" stroke="#1e3550" stroke-width="1.2"/>
<rect x="26" y="98" width="14" height="14" rx="3" fill="#f4f8fc" stroke="#7a8a9a" stroke-width="1"/>
<path d="M29,101 v7 h3 M29,104 h3" stroke="#2a6a9a" stroke-width="1.3" fill="none"/><path d="M33,102h4M33,105h4M33,108h4" stroke="#8a9aaa" stroke-width="1.2"/>
<rect x="59.5" y="106.5" width="4.5" height="4.5" fill="#ddd" stroke="#000" stroke-width="1.3"/><rect x="65" y="107.6" width="2.6" height="2.6" fill="#000"/>
<rect x="59.5" y="159.0" width="4.5" height="4.5" fill="#ddd" stroke="#000" stroke-width="1.3"/><rect x="65" y="160.1" width="2.6" height="2.6" fill="#000"/>
<rect x="59.5" y="211.5" width="4.5" height="4.5" fill="#ddd" stroke="#000" stroke-width="1.3"/><rect x="65" y="212.6" width="2.6" height="2.6" fill="#000"/>
<path d="M224,249 V259" stroke="#c03030" stroke-width="1"/><text x="221.5" y="250" font-size="5" fill="#c03030">z</text>
<rect x="222.5" y="259.5" width="4" height="6.5" fill="#fff" stroke="#000" stroke-width="1"/>
<path d="M227,265.5 H237" stroke="#777" stroke-width="0.8"/><text x="237" y="265" font-size="6" fill="#888">x</text>
<rect x="712.5" y="206.5" width="4" height="6.5" fill="#fff" stroke="#1a1a5a" stroke-width="1.2"/>
<rect x="164.0" y="268.0" width="15.0" height="6" fill="#fff" opacity="0.85"/><text x="171.5" y="273.0" font-size="5" fill="#14148a" text-anchor="middle">100.0</text>
<rect x="164.0" y="365.0" width="15.0" height="6" fill="#fff" opacity="0.85"/><text x="171.5" y="370.0" font-size="5" fill="#14148a" text-anchor="middle">100.0</text>
<rect x="190.5" y="372.5" width="15.0" height="6" fill="#fff" opacity="0.85"/><text x="198.0" y="377.5" font-size="5" fill="#14148a" text-anchor="middle">150.0</text>
<rect x="190.5" y="469.5" width="15.0" height="6" fill="#fff" opacity="0.85"/><text x="198.0" y="474.5" font-size="5" fill="#14148a" text-anchor="middle">150.0</text>
<rect x="164.0" y="477.5" width="15.0" height="6" fill="#fff" opacity="0.85"/><text x="171.5" y="482.5" font-size="5" fill="#14148a" text-anchor="middle">200.0</text>
<rect x="164.0" y="574.5" width="15.0" height="6" fill="#fff" opacity="0.85"/><text x="171.5" y="579.5" font-size="5" fill="#14148a" text-anchor="middle">200.0</text>
<rect x="190.5" y="582.5" width="15.0" height="6" fill="#fff" opacity="0.85"/><text x="198.0" y="587.5" font-size="5" fill="#14148a" text-anchor="middle">250.0</text>
<rect x="190.5" y="679.5" width="15.0" height="6" fill="#fff" opacity="0.85"/><text x="198.0" y="684.5" font-size="5" fill="#14148a" text-anchor="middle">250.0</text>
<rect x="216.5" y="687.5" width="15.0" height="6" fill="#fff" opacity="0.85"/><text x="224.0" y="692.5" font-size="5" fill="#14148a" text-anchor="middle">300.0</text>
<rect x="216.5" y="784.5" width="15.0" height="6" fill="#fff" opacity="0.85"/><text x="224.0" y="789.5" font-size="5" fill="#14148a" text-anchor="middle">300.0</text>
<rect x="65.5" y="784.5" width="9.0" height="6" fill="#fff" opacity="0.85"/><text x="70.0" y="789.5" font-size="5" fill="#14148a" text-anchor="middle">0.0</text>
<rect x="374.5" y="784.5" width="9.0" height="6" fill="#fff" opacity="0.85"/><text x="379.0" y="789.5" font-size="5" fill="#14148a" text-anchor="middle">0.0</text>
<path d="M397.3,266 V843.5 M411.3,266 V791.3" stroke="#2a1a8a" stroke-width="1.3"/>
<path d="M387,266.3 H415" stroke="#2a1a8a" stroke-width="1"/><path d="M394,269.3 L400,263.3" stroke="#2a1a8a" stroke-width="1.2"/>
<path d="M387,371.3 H400" stroke="#2a1a8a" stroke-width="1"/><path d="M394,374.3 L400,368.3" stroke="#2a1a8a" stroke-width="1.2"/>
<path d="M387,476.3 H400" stroke="#2a1a8a" stroke-width="1"/><path d="M394,479.3 L400,473.3" stroke="#2a1a8a" stroke-width="1.2"/>
<path d="M387,581.3 H400" stroke="#2a1a8a" stroke-width="1"/><path d="M394,584.3 L400,578.3" stroke="#2a1a8a" stroke-width="1.2"/>
<path d="M387,686.3 H400" stroke="#2a1a8a" stroke-width="1"/><path d="M394,689.3 L400,683.3" stroke="#2a1a8a" stroke-width="1.2"/>
<path d="M387,791.3 H415" stroke="#2a1a8a" stroke-width="1"/><path d="M394,794.3 L400,788.3" stroke="#2a1a8a" stroke-width="1.2"/>
<path d="M387,843.8 H400" stroke="#2a1a8a" stroke-width="1"/><path d="M394,846.8 L400,840.8" stroke="#2a1a8a" stroke-width="1.2"/>
<path d="M408,269.3 L414,263.3" stroke="#2a1a8a" stroke-width="1.2"/>
<path d="M408,794.3 L414,788.3" stroke="#2a1a8a" stroke-width="1.2"/>
<rect x="388.5" y="311.3" width="6" height="15.0" fill="#fff" opacity="0.9"/><text transform="translate(393.5,318.8) rotate(-90)" font-size="5.5" fill="#14148a" text-anchor="middle">100.0</text>
<rect x="388.5" y="416.3" width="6" height="15.0" fill="#fff" opacity="0.9"/><text transform="translate(393.5,423.8) rotate(-90)" font-size="5.5" fill="#14148a" text-anchor="middle">100.0</text>
<rect x="388.5" y="521.3" width="6" height="15.0" fill="#fff" opacity="0.9"/><text transform="translate(393.5,528.8) rotate(-90)" font-size="5.5" fill="#14148a" text-anchor="middle">100.0</text>
<rect x="388.5" y="626.3" width="6" height="15.0" fill="#fff" opacity="0.9"/><text transform="translate(393.5,633.8) rotate(-90)" font-size="5.5" fill="#14148a" text-anchor="middle">100.0</text>
<rect x="388.5" y="731.3" width="6" height="15.0" fill="#fff" opacity="0.9"/><text transform="translate(393.5,738.8) rotate(-90)" font-size="5.5" fill="#14148a" text-anchor="middle">100.0</text>
<rect x="388.5" y="811.5" width="6" height="12.0" fill="#fff" opacity="0.9"/><text transform="translate(393.5,817.5) rotate(-90)" font-size="5.5" fill="#14148a" text-anchor="middle">50.0</text>
<rect x="402.5" y="521.3" width="6" height="15.0" fill="#fff" opacity="0.9"/><text transform="translate(407.5,528.8) rotate(-90)" font-size="5.5" fill="#14148a" text-anchor="middle">500.0</text>
<path d="M66.7,858.5 H381.7" stroke="#1a4a9a" stroke-width="1.3"/><path d="M66.7,853 V864 M381.7,853 V864" stroke="#1a4a9a" stroke-width="1"/><path d="M64,861 L69,856 M379,861 L384,856" stroke="#1a4a9a" stroke-width="1.2"/>
<rect x="216.5" y="852.0" width="15.0" height="6" fill="#fff" opacity="0.85"/><text x="224.0" y="857.0" font-size="5" fill="#14148a" text-anchor="middle">300.0</text>
<rect x="65.5" y="806.5" width="3.5" height="7" fill="#fff" stroke="#000" stroke-width="1"/>
<rect x="234.2" y="277.7" width="53.6" height="42.6" fill="#f4f4fa" stroke="#000" stroke-width="1.15"/>
<text x="235.0" y="283.1" font-size="5.7" fill="#00008c">Strato 1 (strato 1 )</text>
<text x="235.0" y="289.9" font-size="5.7" fill="#00008c">Terreno 1 (coesivo)</text>
<text x="235.0" y="296.6" font-size="5.7" fill="#00008c">(Sabbia limosa)</text>
<text x="235.0" y="303.4" font-size="5.7" fill="#00008c">c' = 0 daN/cm2</text>
<text x="235.0" y="310.1" font-size="5.7" fill="#00008c">Ø = 24 °</text>
<text x="235.0" y="316.9" font-size="5.7" fill="#00008c">cu =0.05 daN/cm2</text>
<rect x="820.7" y="576.7" width="65.6" height="35.6" fill="#f4f4fa" stroke="#000" stroke-width="1.15"/>
<text x="853.5" y="582.1" font-size="5.7" fill="#00008c" text-anchor="middle">Strato 2 (strato 2)</text>
<text x="853.5" y="588.9" font-size="5.7" fill="#00008c" text-anchor="middle">Terreno 2 (non coesivo)</text>
<text x="853.5" y="595.6" font-size="5.7" fill="#00008c" text-anchor="middle">(Sabbia e ghiaia)</text>
<text x="853.5" y="602.4" font-size="5.7" fill="#00008c" text-anchor="middle">c' = 0 daN/cm2</text>
<text x="853.5" y="609.1" font-size="5.7" fill="#00008c" text-anchor="middle">Ø = 32 °</text>
<rect x="556.7" y="907.2" width="65.6" height="35.1" fill="#f4f4fa" stroke="#000" stroke-width="1.15"/>
<text x="589.5" y="912.6" font-size="5.7" fill="#00008c" text-anchor="middle">Strato 3 (strato 3)</text>
<text x="589.5" y="919.4" font-size="5.7" fill="#00008c" text-anchor="middle">Terreno 3 (non coesivo)</text>
<text x="589.5" y="926.1" font-size="5.7" fill="#00008c" text-anchor="middle">(Ghiaia)</text>
<text x="589.5" y="932.9" font-size="5.7" fill="#00008c" text-anchor="middle">c' = 0 daN/cm2</text>
<text x="589.5" y="939.6" font-size="5.7" fill="#00008c" text-anchor="middle">Ø = 36 °</text>
<rect x="387.5" y="849.5" width="47" height="21.5" fill="#f4f4fa" stroke="#000" stroke-width="1.15"/><path d="M389,851.8 H433" stroke="#14148a" stroke-width="1.2" stroke-dasharray="1.2 1.8"/>
<svg x="388" y="850" width="46" height="21"><text x="-0.5" y="11.6" font-size="5.6" font-weight="bold" fill="#14148a">coeff. Winkler :</text><text x="-0.5" y="19" font-size="5.6" font-weight="bold" fill="#14148a">3 [daN/cm3]</text></svg>
</g>
</svg>
<div style="left:941px;top:72px;width:336px;height:129px;background:#dce8f6;border-top:2px solid #6c6c6c;border-left:2px solid #6c6c6c;border-right:1px solid #fff;border-bottom:1px solid #fff"></div>
<div style="left:948px;top:77px;width:105px;height:70px;background:#a9d8e6;border:1px solid #111;box-shadow:inset 0 0 0 0.5px #333"></div>
<svg style="position:absolute;left:948px;top:77px" width="105" height="70" viewBox="0 0 105 70"><defs><linearGradient id="wg" x1="0" y1="0" x2="0" y2="1"><stop offset="0" stop-color="#d8d0d0"/><stop offset="1" stop-color="#b0aaaa"/></linearGradient></defs><path d="M23,6 L29,6 L29,55 L13,55Z" fill="url(#wg)"/><path d="M23,6 L29,6 L29,55" fill="none" stroke="#000" stroke-width="1.1"/><path d="M23.5,7 L13,55" stroke="#000" stroke-dasharray="2 1.6" stroke-width="0.8"/><rect x="4" y="55" width="41" height="9" fill="#9c9898"/><rect x="3" y="64" width="45" height="2" fill="#f4f8fa"/><rect x="47" y="65" width="1" height="2" fill="#000"/><path d="M30,17 L72,24" stroke="#70dcec" stroke-width="1"/><path d="M72,22 L102,27 L101,31 L71,26Z" fill="#e8f6fa" stroke="#000" stroke-dasharray="2 1.2" stroke-width="0.7"/><path d="M30,35 L60,43" stroke="#70dcec" stroke-width="1"/><path d="M60,41 L84,46 L83,50 L59,45Z" fill="#e8f6fa" stroke="#000" stroke-dasharray="2 1.2" stroke-width="0.7"/></svg>
<div class="t" style="left:1009px;top:84px;font-style:italic;font-size:11px;color:#111">sezione</div>
<div style="left:1055px;top:77px;width:105px;height:70px;background:#fff;border:1px solid #111;box-shadow:inset 0 0 0 0.5px #333"></div>
<svg style="position:absolute;left:1055px;top:77px" width="105" height="70" viewBox="0 0 105 70"><rect x="2" y="10" width="43.5" height="50" fill="#c8c8c8"/><rect x="2" y="10" width="11.5" height="50" fill="#8a8a8a"/><rect x="28" y="10" width="17.5" height="50" fill="#8e8e8e"/><path d="M2,10 H45.5 M2,60 H45.5 M2.5,10 V60 M23.3,10 V60 M45,10 V60" fill="none" stroke="#000" stroke-width="1.1"/><path d="M18,18.5 H56 M22,34.3 H68 M18,51.5 H56" stroke="#000" stroke-dasharray="1.2 1.4" stroke-width="0.8"/><path d="M56,18.5 H83 M68,34.3 H103 M56,51.5 H83" stroke="#999" stroke-dasharray="1.5 1" stroke-width="1.6"/></svg>
<div class="t" style="left:1124px;top:84px;font-style:italic;font-size:11px;color:#111">pianta</div>
<div style="left:1162px;top:77px;width:105px;height:70px;background:#fff;border:1px solid #111;box-shadow:inset 0 0 0 0.5px #333"></div>
<svg style="position:absolute;left:1162px;top:77px" width="105" height="70" viewBox="0 0 105 70"><rect x="24.6" y="2" width="55.8" height="55" fill="#c8c8c8"/><path d="M43.5,2 V57" stroke="#111" stroke-width="1"/><path d="M62.4,2 V57" stroke="#777" stroke-width="0.8"/><rect x="24.6" y="57" width="55.8" height="9.6" fill="#8c8c8c"/><path d="M24.6,67 H80.4" stroke="#000" stroke-width="1.2"/><path d="M24.6,57 H80.4" stroke="#333" stroke-width="0.8"/><rect x="33.5" y="29.5" width="1.5" height="1.5" fill="#000"/><rect x="71.5" y="29.5" width="1.2" height="1.2" fill="#555"/></svg>
<div class="t" style="left:1215px;top:84px;font-style:italic;font-size:11px;color:#111">prospetto</div>
<svg style="position:absolute;left:954px;top:152px" width="12" height="15" viewBox="0 0 12 15"><path d="M3,9 L1.5,13.5" stroke="#555" stroke-width="1.6"/><circle cx="6.5" cy="5.5" r="4.6" fill="#60c848" stroke="#666" stroke-width="0.6"/><ellipse cx="5.5" cy="4" rx="2.2" ry="1.4" fill="#fff" opacity="0.7"/></svg>
<svg style="position:absolute;left:954px;top:177px" width="12" height="15" viewBox="0 0 12 15"><path d="M3,9 L1.5,13.5" stroke="#555" stroke-width="1.6"/><circle cx="6.5" cy="5.5" r="4.6" fill="#b8b8b8" stroke="#666" stroke-width="0.6"/><ellipse cx="5.5" cy="4" rx="2.2" ry="1.4" fill="#fff" opacity="0.7"/></svg>
<svg style="position:absolute;left:1061px;top:152px" width="12" height="15" viewBox="0 0 12 15"><path d="M3,9 L1.5,13.5" stroke="#555" stroke-width="1.6"/><circle cx="6.5" cy="5.5" r="4.6" fill="#b8b8b8" stroke="#666" stroke-width="0.6"/><ellipse cx="5.5" cy="4" rx="2.2" ry="1.4" fill="#fff" opacity="0.7"/></svg>
<svg style="position:absolute;left:1061px;top:177px" width="12" height="15" viewBox="0 0 12 15"><path d="M3,9 L1.5,13.5" stroke="#555" stroke-width="1.6"/><circle cx="6.5" cy="5.5" r="4.6" fill="#b8b8b8" stroke="#666" stroke-width="0.6"/><ellipse cx="5.5" cy="4" rx="2.2" ry="1.4" fill="#fff" opacity="0.7"/></svg>
<div style="left:967px;top:150px;width:33px;height:22px;background:#e6e8ea;border:1px solid #c8c8c8"></div>
<svg style="position:absolute;left:968px;top:151px" width="31" height="20" viewBox="0 0 31 20"><path d="M3,17 L10,4 L17,17Z" fill="#f3d84a" stroke="#9a8a30"/><rect x="9.3" y="8" width="1.6" height="5" fill="#000"/><rect x="9.3" y="14" width="1.6" height="1.6" fill="#000"/><circle cx="20" cy="8" r="5" fill="#a8d0f0" stroke="#6a90b0"/><path d="M23.5,11.5 L28,16" stroke="#c89040" stroke-width="2.2"/></svg>
<div class="t" style="left:1003px;top:156px;font-size:9.4px;color:#222">Default</div>
<div style="left:967px;top:175px;width:33px;height:22px;background:#e6e8ea;border:1px solid #c8c8c8"></div>
<svg style="position:absolute;left:968px;top:176px" width="31" height="20" viewBox="0 0 31 20"><path d="M4,2 V18 M4,2 H9 L15,18 M4,7 H11 M4,12 H13 M4,18 H15" fill="none" stroke="#2828b0" stroke-width="1.2"/><circle cx="20" cy="8" r="5" fill="#a8d0f0" stroke="#6a90b0"/><path d="M23.5,11.5 L28,16" stroke="#c89040" stroke-width="2.2"/></svg>
<div class="t" style="left:1003px;top:180px;font-size:9.4px;color:#222">Armatura</div>
<div style="left:1074px;top:150px;width:32px;height:22px;background:#e6e8ea;border:1px solid #c8c8c8"></div>
<svg style="position:absolute;left:1075px;top:151px" width="30" height="20" viewBox="0 0 30 20"><rect x="1" y="1" width="28" height="18" fill="#bfeaf8"/><path d="M4,18 L10,6 L10,18Z" fill="#8a30d0"/><path d="M12,5 V17 H17 M12,17 H10" stroke="#000" stroke-width="1.6" fill="none"/><path d="M16,3 H22 L27,17 H16Z" fill="#c8f0c8" stroke="#30b060" stroke-width="0.8"/></svg>
<div class="t" style="left:1110px;top:149px;font-size:9.4px;color:#222">Risultati</div>
<div class="t" style="left:1110px;top:158.5px;font-size:9.4px;color:#222">strutturali</div>
<div style="left:1074px;top:175px;width:32px;height:22px;background:#e6e8ea;border:1px solid #c8c8c8"></div>
<svg style="position:absolute;left:1075px;top:176px" width="30" height="20" viewBox="0 0 30 20"><rect x="1" y="1" width="28" height="18" fill="#bfeaf8"/><path d="M4,18 L10,6 L10,18Z" fill="#8a30d0"/><path d="M12,5 V17 H17 M12,17 H10" stroke="#000" stroke-width="1.6" fill="none"/><circle cx="20" cy="8" r="5" fill="#a8d0f0" stroke="#6a90b0"/><path d="M23.5,11.5 L28,16" stroke="#c89040" stroke-width="2.2"/></svg>
<div class="t" style="left:1110px;top:174px;font-size:9.4px;color:#222">Risultati</div>
<div class="t" style="left:1110px;top:184.5px;font-size:9.4px;color:#222">completi</div>
<div style="left:1170px;top:153px;width:96px;height:42px;border-top:1px solid #6a6a6a;border-left:1px solid #6a6a6a;border-right:1px solid #fff;border-bottom:1px solid #fff"></div>
<div class="t" style="left:1178px;top:157px;font-size:9.4px;color:#222">(interasse modulo)</div>
<div class="t" style="left:1183px;top:178px;font-size:11px;font-weight:bold;color:#222">I =</div>
<div style="left:1203px;top:172px;width:28px;height:19px;background:#eeeeee;border:1px solid #dcdcdc"></div>
<div class="t" style="left:1206px;top:176px;font-size:11px;color:#8a8a8a">100</div>
<div style="left:1231px;top:172px;width:20px;height:19px;background:#ddedfa;border:1px solid #5a98c8;border-left:2px solid #4a88c0"></div>
<svg style="position:absolute;left:1231px;top:172px" width="6" height="6" viewBox="0 0 6 6"><path d="M0,0 H6 L0,6Z" fill="#3d80c8"/></svg>
<div class="t" style="left:1233px;top:176px;font-size:11px;color:#222">cm</div>
<div style="left:941px;top:207px;width:336px;height:754px;background:#f3f3f3;border-top:2px solid #6c6c6c;border-left:2px solid #6c6c6c;border-right:1px solid #fff;border-bottom:1px solid #fff"></div>
<div style="left:945px;top:210px;width:59px;height:24px;background:#ececec;border-left:1px solid #fafafa;border-right:1px solid #d6d6d6;border-bottom:1px solid #d6d6d6"></div>
<div style="left:1004px;top:210px;width:76px;height:24px;background:#ececec;border-left:1px solid #fafafa;border-right:1px solid #d6d6d6;border-bottom:1px solid #d6d6d6"></div>
<div style="left:1080px;top:210px;width:64px;height:24px;background:#ececec;border-left:1px solid #fafafa;border-right:1px solid #d6d6d6;border-bottom:1px solid #d6d6d6"></div>
<div style="left:1144px;top:210px;width:52px;height:24px;background:#ececec;border-left:1px solid #fafafa;border-right:1px solid #d6d6d6;border-bottom:1px solid #d6d6d6"></div>
<div style="left:1196px;top:210px;width:77px;height:24px;background:#ececec;border-left:1px solid #fafafa;border-right:1px solid #d6d6d6;border-bottom:1px solid #d6d6d6"></div>
<div style="left:1022px;top:234px;width:70px;height:27px;background:#ececec;border-left:1px solid #fafafa;border-right:1px solid #d6d6d6;border-bottom:1px solid #d6d6d6"></div>
<div style="left:1092px;top:234px;width:74px;height:27px;background:#ececec;border-left:1px solid #fafafa;border-right:1px solid #d6d6d6;border-bottom:1px solid #d6d6d6"></div>
<div style="left:1166px;top:234px;width:57px;height:27px;background:#ececec;border-left:1px solid #fafafa;border-right:1px solid #d6d6d6;border-bottom:1px solid #d6d6d6"></div>
<div style="left:1223px;top:234px;width:50px;height:27px;background:#ececec;border-left:1px solid #fafafa;border-right:1px solid #d6d6d6;border-bottom:1px solid #d6d6d6"></div>
<div style="left:944px;top:233px;width:78px;height:30px;background:#fff"></div>
<div class="t" style="left:975px;top:217.5px;font-size:11px;color:#222">Muro</div>
<div class="t" style="left:1034px;top:217.5px;font-size:11px;color:#222">Mensole</div>
<div class="t" style="left:1109px;top:217.5px;font-size:11px;color:#222">Dente</div>
<div class="t" style="left:1174px;top:217.5px;font-size:11px;color:#222">Pali</div>
<div class="t" style="left:1224px;top:217.5px;font-size:11px;color:#222">Vinc.-Tir.</div>
<div class="t" style="left:976px;top:241px;font-size:11px;color:#222">Terreno</div>
<div class="t" style="left:1051px;top:242px;font-size:11px;color:#222">Carichi</div>
<div class="t" style="left:1123px;top:242px;font-size:11px;color:#222">Calcolo</div>
<div class="t" style="left:1197px;top:242px;font-size:11px;color:#222">sez</div>
<div class="t" style="left:1232px;top:242px;font-size:11px;color:#222">Opzioni</div>
<svg style="position:absolute;left:952px;top:213px" width="18" height="17" viewBox="0 0 18 17"><path d="M7,1.5 L9,1.5 L9,13 L16,13 L16,16 L2,16 L2,13 L4.5,13Z" fill="#d0d0d0" stroke="#111" stroke-width="1.3"/></svg>
<svg style="position:absolute;left:1013px;top:213px" width="20" height="17" viewBox="0 0 20 17"><path d="M6,2 L9,2 L9,5 L17,5 L17,8 L9,8 L9,16 L5,16 L6,8 L2,8 L2,5 L6,5Z" fill="#d0d0d0" stroke="#111" stroke-width="1.3"/></svg>
<svg style="position:absolute;left:1087px;top:213px" width="20" height="17" viewBox="0 0 20 17"><path d="M9,2 L12,2 L12,8 L18,8 L18,11 L2,11 L2,13 L8,13Z" fill="#d0d0d0" stroke="#111" stroke-width="1.3"/><rect x="2" y="10" width="5" height="4" fill="#b02020"/></svg>
<svg style="position:absolute;left:1151px;top:213px" width="19" height="17" viewBox="0 0 19 17"><path d="M7,1 L11,1 L11,6 L17,8 V16 H2 V8 L7,6Z" fill="#d0d0d0" stroke="#111" stroke-width="1.3"/><path d="M3,10 V16 M8,10 V16 M12,10 V16 M16,10 V16" stroke="#a01818" stroke-width="2"/></svg>
<svg style="position:absolute;left:1203px;top:213px" width="20" height="17" viewBox="0 0 20 17"><path d="M5,2 L8,2 L8,5 L14,5 V7 H8 L8,13 L14,13 L14,16 L2,16 L2,13 L4,13 L4,2Z" fill="#d0d0d0" stroke="#111" stroke-width="1.3"/><rect x="14" y="4" width="4" height="3" fill="#b02020"/></svg>
<svg style="position:absolute;left:954px;top:237px" width="19" height="19" viewBox="0 0 19 19"><rect x="7" y="3" width="11" height="10" fill="#c04040"/><path d="M8,6 l4,4 4-4" stroke="#e03030" stroke-width="2" fill="none"/><path d="M4,2 L7,2 L7,13 L13,13 L13,16 L1,16 L1,13 L3,13Z" fill="#d0d0d0" stroke="#111" stroke-width="1.1"/><path d="M1,18 H18" stroke="#8a6a20" stroke-width="1.5" stroke-dasharray="3 1"/></svg>
<svg style="position:absolute;left:1029px;top:238px" width="19" height="18" viewBox="0 0 19 18"><path d="M7,1 V7 M4,4 l3,3 3-3" stroke="#c02020" stroke-width="1.3" fill="none"/><path d="M15,3 V14 M12,11 l3,3 3-3" stroke="#208020" stroke-width="1.3" fill="none"/><path d="M2,9 H13 M3,9 V15 M7,9 V15 M11,9 V15 M1,16 H18" stroke="#2020b0" stroke-width="1.4"/></svg>
<svg style="position:absolute;left:1101px;top:238px" width="18" height="18" viewBox="0 0 18 18"><circle cx="9" cy="9" r="6.5" fill="#a8aeb6" stroke="#7a8088" stroke-width="2.5" stroke-dasharray="2.3 1.6"/><circle cx="9" cy="9" r="3" fill="#e8e8e8"/></svg>
<svg style="position:absolute;left:1175px;top:239px" width="17" height="18" viewBox="0 0 17 18"><rect x="1" y="1" width="15" height="16" fill="#dbe8f8" stroke="#3a5aa0"/><path d="M4,3 V15 M4,3 h5 l3,12" stroke="#2a4ab0" fill="none"/><path d="M10,8 l4,6" stroke="#888" stroke-width="1.5"/></svg>
<div style="left:947px;top:262px;width:327px;height:694px;background:#fff;border:1px solid #707070;border-top:2px solid #6a6a6a"></div>
<div style="left:951px;top:265px;width:319px;height:194px;background:#dae7f8;border:1px solid #6e6e6e"></div>
<div style="left:952px;top:266px;width:317px;height:21px;background:linear-gradient(70deg,#f8b47c 0%,#fcd89a 45%,#fff3b6 100%)"></div>
<div class="t" style="left:961px;top:271.5px;font-size:11px;font-weight:bold;color:#222">Profili Monte e Valle</div>
<svg style="position:absolute;left:1251px;top:270px" width="12" height="12" viewBox="0 0 12 12"><path d="M2,6 L6,2 L10,6 M2,10 L6,6 L10,10" stroke="#6a6a6a" stroke-width="1.4" fill="none"/></svg>
<div style="left:951px;top:465px;width:319px;height:134px;background:#dae7f8;border:1px solid #6e6e6e"></div>
<div style="left:952px;top:466px;width:317px;height:21px;background:linear-gradient(70deg,#fff7c0 0%,#fde0a0 45%,#f8b47c 100%)"></div>
<div class="t" style="left:961px;top:471.5px;font-size:11px;font-weight:bold;color:#222">Stratigrafia</div>
<svg style="position:absolute;left:1251px;top:470px" width="12" height="12" viewBox="0 0 12 12"><path d="M2,6 L6,2 L10,6 M2,10 L6,6 L10,10" stroke="#6a6a6a" stroke-width="1.4" fill="none"/></svg>
<div style="left:951px;top:605px;width:319px;height:22px;background:#dae7f8;border:1px solid #6e6e6e"></div>
<div style="left:952px;top:606px;width:317px;height:20px;background:linear-gradient(70deg,#f8b47c 0%,#fcd89a 45%,#fff3b6 100%)"></div>
<div class="t" style="left:961px;top:611.5px;font-size:11px;font-weight:bold;color:#222">Zone</div>
<svg style="position:absolute;left:1251px;top:610px" width="12" height="12" viewBox="0 0 12 12"><path d="M2,2 L6,6 L10,2 M2,6 L6,10 L10,6" stroke="#6a6a6a" stroke-width="1.4" fill="none"/></svg>
<div style="left:951px;top:633px;width:319px;height:22px;background:#dae7f8;border:1px solid #6e6e6e"></div>
<div style="left:952px;top:634px;width:317px;height:20px;background:linear-gradient(70deg,#fff7c0 0%,#fde0a0 45%,#f8b47c 100%)"></div>
<div class="t" style="left:961px;top:639.5px;font-size:11px;font-weight:bold;color:#222">Falda</div>
<svg style="position:absolute;left:1251px;top:638px" width="12" height="12" viewBox="0 0 12 12"><path d="M2,2 L6,6 L10,2 M2,6 L6,10 L10,6" stroke="#6a6a6a" stroke-width="1.4" fill="none"/></svg>
<div style="left:951px;top:661px;width:319px;height:261px;background:#dae7f8;border:1px solid #6e6e6e"></div>
<div style="left:952px;top:662px;width:317px;height:21px;background:linear-gradient(70deg,#f8b47c 0%,#fcd89a 45%,#fff3b6 100%)"></div>
<div class="t" style="left:961px;top:667.5px;font-size:11px;font-weight:bold;color:#222">Terreni</div>
<svg style="position:absolute;left:1251px;top:666px" width="12" height="12" viewBox="0 0 12 12"><path d="M2,6 L6,2 L10,6 M2,10 L6,6 L10,10" stroke="#6a6a6a" stroke-width="1.4" fill="none"/></svg>
<div class="t" style="left:961px;top:289px;font-size:11px;font-weight:bold;color:#222">vertici profilo di Valle :</div>
<div class="t" style="left:1110px;top:289px;font-size:11px;font-weight:bold;color:#222">vertici profilo di Monte :</div>
<div style="left:958px;top:302px;width:145px;height:126px;background:#fff;border-top:2px solid #6a6a6a;border-left:2px solid #6a6a6a;border-right:1px solid #7a7a7a;border-bottom:1px solid #7a7a7a"></div>
<div style="left:960px;top:303px;width:24.5px;height:20px;background:#ececec;border-right:1px solid #c8c8c8;border-bottom:1px solid #c8c8c8"></div>
<div style="left:984.5px;top:303px;width:25.5px;height:20px;background:#f0f0f0;border-right:1px solid #c8c8c8;border-bottom:1px solid #c8c8c8"></div>
<div style="left:1010px;top:303px;width:19px;height:20px;background:#ddedfa;border:1px solid #5a98c8;border-left:2px solid #4a88c0"></div>
<div style="left:1029px;top:303px;width:26px;height:20px;background:#f0f0f0;border-right:1px solid #c8c8c8;border-bottom:1px solid #c8c8c8"></div>
<div style="left:1055px;top:303px;width:19px;height:20px;background:#ddedfa;border:1px solid #5a98c8;border-left:2px solid #4a88c0"></div>
<svg style="position:absolute;left:1010px;top:303px" width="6" height="6" viewBox="0 0 6 6"><path d="M0,0 H6 L0,6Z" fill="#3d8ed8"/></svg>
<svg style="position:absolute;left:1055px;top:303px" width="6" height="6" viewBox="0 0 6 6"><path d="M0,0 H6 L0,6Z" fill="#3d8ed8"/></svg>
<div class="t" style="left:993.25px;top:309px;font-size:11px;color:#333">X</div>
<div class="t" style="left:1038.0px;top:309px;font-size:11px;color:#333">Z</div>
<div class="t" style="left:1013px;top:308px;font-size:11px;color:#111">cm</div>
<div class="t" style="left:1058px;top:308px;font-size:11px;color:#111">cm</div>
<div style="left:960px;top:323px;width:24.5px;height:20px;background:#ececec;border-right:1px solid #c8c8c8;border-bottom:1px solid #c8c8c8"></div>
<div style="left:984.5px;top:323px;width:44.5px;height:20px;background:#fff;border-right:1px solid #c8c8c8;border-bottom:1px solid #c8c8c8"></div>
<div style="left:1029px;top:323px;width:45px;height:20px;background:#fff;border-right:1px solid #c8c8c8;border-bottom:1px solid #c8c8c8"></div>
<div class="t" style="left:966px;top:328px;font-size:11px;color:#222">1</div>
<div class="t" style="left:986.5px;top:328px;font-size:11px;color:#222">-150</div>
<div class="t" style="left:1031px;top:328px;font-size:11px;color:#222">-522.12</div>
<div style="left:960px;top:343px;width:24.5px;height:20px;background:#ececec;border-right:1px solid #c8c8c8;border-bottom:1px solid #c8c8c8"></div>
<div style="left:984.5px;top:343px;width:44.5px;height:20px;background:#fff;border-right:1px solid #c8c8c8;border-bottom:1px solid #c8c8c8"></div>
<div style="left:1029px;top:343px;width:45px;height:20px;background:#fff;border-right:1px solid #c8c8c8;border-bottom:1px solid #c8c8c8"></div>
<div class="t" style="left:966px;top:348px;font-size:11px;color:#222">2</div>
<div class="t" style="left:986.5px;top:348px;font-size:11px;color:#222">-473.89</div>
<div class="t" style="left:1031px;top:348px;font-size:11px;color:#222">-591.5</div>
<div style="left:1110px;top:302px;width:141px;height:126px;background:#fff;border-top:2px solid #6a6a6a;border-left:2px solid #6a6a6a;border-right:1px solid #7a7a7a;border-bottom:1px solid #7a7a7a"></div>
<div style="left:1112px;top:303px;width:24.5px;height:20px;background:#ececec;border-right:1px solid #c8c8c8;border-bottom:1px solid #c8c8c8"></div>
<div style="left:1136.5px;top:303px;width:26.0px;height:20px;background:#f0f0f0;border-right:1px solid #c8c8c8;border-bottom:1px solid #c8c8c8"></div>
<div style="left:1162.5px;top:303px;width:18.5px;height:20px;background:#ddedfa;border:1px solid #5a98c8;border-left:2px solid #4a88c0"></div>
<div style="left:1181px;top:303px;width:26px;height:20px;background:#f0f0f0;border-right:1px solid #c8c8c8;border-bottom:1px solid #c8c8c8"></div>
<div style="left:1207px;top:303px;width:19px;height:20px;background:#ddedfa;border:1px solid #5a98c8;border-left:2px solid #4a88c0"></div>
<svg style="position:absolute;left:1162.5px;top:303px" width="6" height="6" viewBox="0 0 6 6"><path d="M0,0 H6 L0,6Z" fill="#3d8ed8"/></svg>
<svg style="position:absolute;left:1207px;top:303px" width="6" height="6" viewBox="0 0 6 6"><path d="M0,0 H6 L0,6Z" fill="#3d8ed8"/></svg>
<div class="t" style="left:1145.5px;top:309px;font-size:11px;color:#333">X</div>
<div class="t" style="left:1190.0px;top:309px;font-size:11px;color:#333">Z</div>
<div class="t" style="left:1165.5px;top:308px;font-size:11px;color:#111">cm</div>
<div class="t" style="left:1210px;top:308px;font-size:11px;color:#111">cm</div>
<div style="left:1112px;top:323px;width:24.5px;height:20px;background:#ececec;border-right:1px solid #c8c8c8;border-bottom:1px solid #c8c8c8"></div>
<div style="left:1136.5px;top:323px;width:44.5px;height:20px;background:#fff;border-right:1px solid #c8c8c8;border-bottom:1px solid #c8c8c8"></div>
<div style="left:1181px;top:323px;width:45px;height:20px;background:#fff;border-right:1px solid #c8c8c8;border-bottom:1px solid #c8c8c8"></div>
<div class="t" style="left:1118px;top:328px;font-size:11px;color:#222">1</div>
<div class="t" style="left:1138.5px;top:328px;font-size:11px;color:#222">0</div>
<div class="t" style="left:1183px;top:328px;font-size:11px;color:#222">0</div>
<div style="left:1112px;top:343px;width:24.5px;height:20px;background:#ececec;border-right:1px solid #c8c8c8;border-bottom:1px solid #c8c8c8"></div>
<div style="left:1136.5px;top:343px;width:44.5px;height:20px;background:#fff;border-right:1px solid #c8c8c8;border-bottom:1px solid #c8c8c8"></div>
<div style="left:1181px;top:343px;width:45px;height:20px;background:#fff;border-right:1px solid #c8c8c8;border-bottom:1px solid #c8c8c8"></div>
<div class="t" style="left:1118px;top:348px;font-size:11px;color:#222">2</div>
<div class="t" style="left:1138.5px;top:348px;font-size:11px;color:#222">467.41</div>
<div class="t" style="left:1183px;top:348px;font-size:11px;color:#222">50.54</div>
<div style="left:1112px;top:363px;width:24.5px;height:20px;background:#ececec;border-right:1px solid #c8c8c8;border-bottom:1px solid #c8c8c8"></div>
<div style="left:1136.5px;top:363px;width:44.5px;height:20px;background:#fff;border-right:1px solid #c8c8c8;border-bottom:1px solid #c8c8c8"></div>
<div style="left:1181px;top:363px;width:45px;height:20px;background:#fff;border-right:1px solid #c8c8c8;border-bottom:1px solid #c8c8c8"></div>
<div class="t" style="left:1118px;top:368px;font-size:11px;color:#222">3</div>
<div class="t" style="left:1138.5px;top:368px;font-size:11px;color:#222">695.45</div>
<div class="t" style="left:1183px;top:368px;font-size:11px;color:#222">170.78</div>
<div style="left:1112px;top:383px;width:24.5px;height:20px;background:#ececec;border-right:1px solid #c8c8c8;border-bottom:1px solid #c8c8c8"></div>
<div style="left:1136.5px;top:383px;width:44.5px;height:20px;background:#fff;border-right:1px solid #c8c8c8;border-bottom:1px solid #c8c8c8"></div>
<div style="left:1181px;top:383px;width:45px;height:20px;background:#fff;border-right:1px solid #c8c8c8;border-bottom:1px solid #c8c8c8"></div>
<div class="t" style="left:1118px;top:388px;font-size:11px;color:#222">4</div>
<div class="t" style="left:1138.5px;top:388px;font-size:11px;color:#222">1033.37</div>
<div class="t" style="left:1183px;top:388px;font-size:11px;color:#222">187.37</div>
<div style="left:968px;top:431px;width:23px;height:22px;background:#e4e6e8;border:1px solid #c4c4c4"></div>
<svg style="position:absolute;left:971px;top:433px" width="17" height="17" viewBox="0 0 17 17"><circle cx="8.5" cy="8.5" r="7.5" fill="#2a9a2a" stroke="#1a6a1a" stroke-width="0.8"/><path d="M8.5,4 V13 M4,8.5 H13" stroke="#fff" stroke-width="3"/></svg>
<div style="left:996px;top:431px;width:23px;height:22px;background:#e4e6e8;border:1px solid #c4c4c4"></div>
<svg style="position:absolute;left:999px;top:433px" width="17" height="17" viewBox="0 0 17 17"><circle cx="8.5" cy="8.5" r="7.5" fill="#d83a2a" stroke="#9a2a1a" stroke-width="0.8"/><path d="M5.5,5.5 L11.5,11.5 M11.5,5.5 L5.5,11.5" stroke="#fff" stroke-width="2.4"/></svg>
<div style="left:1052px;top:431px;width:23px;height:22px;background:#e4e6e8;border:1px solid #c4c4c4"></div>
<svg style="position:absolute;left:1055px;top:433px" width="17" height="17" viewBox="0 0 17 17"><path d="M4,14 Q9,6 14,4" stroke="#c8b030" stroke-width="1.5" fill="none"/><circle cx="4" cy="13" r="2.2" fill="#3a8ae0" stroke="#245a9a" stroke-width="0.6"/><circle cx="14" cy="4" r="2.2" fill="#3a8ae0" stroke="#245a9a" stroke-width="0.6"/></svg>
<div style="left:1077px;top:431px;width:23px;height:22px;background:#e4e6e8;border:1px solid #c4c4c4"></div>
<svg style="position:absolute;left:1080px;top:433px" width="17" height="17" viewBox="0 0 17 17"><circle cx="7.5" cy="7.5" r="6.5" fill="#2a9a2a"/><path d="M7.5,3.5 V11.5 M3.5,7.5 H11.5" stroke="#fff" stroke-width="2.6"/><path d="M1,16 L8,11 L17,10" stroke="#b0a020" stroke-width="1.5" fill="none"/></svg>
<div style="left:1102px;top:437px;width:13px;height:13px;background:#fff;border:1px solid #333"></div>
<div class="t" style="left:1118px;top:432px;font-size:9.4px;color:#222">spostamento</div>
<div class="t" style="left:1118px;top:442.5px;font-size:9.4px;color:#222">manuale</div>
<div style="left:1190px;top:431px;width:23px;height:22px;background:#e4e6e8;border:1px solid #c4c4c4"></div>
<svg style="position:absolute;left:1193px;top:433px" width="17" height="17" viewBox="0 0 17 17"><circle cx="8.5" cy="8.5" r="7.5" fill="#2a9a2a" stroke="#1a6a1a" stroke-width="0.8"/><path d="M8.5,4 V13 M4,8.5 H13" stroke="#fff" stroke-width="3"/></svg>
<div style="left:1218px;top:431px;width:23px;height:22px;background:#e4e6e8;border:1px solid #c4c4c4"></div>
<svg style="position:absolute;left:1221px;top:433px" width="17" height="17" viewBox="0 0 17 17"><circle cx="8.5" cy="8.5" r="7.5" fill="#d83a2a" stroke="#9a2a1a" stroke-width="0.8"/><path d="M5.5,5.5 L11.5,11.5 M11.5,5.5 L5.5,11.5" stroke="#fff" stroke-width="2.4"/></svg>
<div style="left:956px;top:493px;width:295px;height:99px;background:#fffdf0;border-top:2px solid #6a6a6a;border-left:2px solid #6a6a6a;border-right:1px solid #fff;border-bottom:1px solid #fff"></div>
<div style="left:959px;top:498px;width:100px;height:22px;background:#e3e3e3;border:1px solid #adadad"></div>
<div class="t" style="left:964px;top:503.5px;font-size:11.5px;font-weight:bold;color:#111">Strato 1</div>
<svg style="position:absolute;left:1043px;top:506.0px" width="9" height="6" viewBox="0 0 9 6"><path d="M1,1 L4.5,4.5 L8,1" stroke="#444" stroke-width="1" fill="none"/></svg>
<div style="left:1064px;top:497px;width:23px;height:22px;background:#e4e6e8;border:1px solid #c4c4c4"></div>
<svg style="position:absolute;left:1067px;top:499px" width="17" height="17" viewBox="0 0 17 17"><circle cx="8.5" cy="8.5" r="7.5" fill="#2a9a2a" stroke="#1a6a1a" stroke-width="0.8"/><path d="M8.5,4 V13 M4,8.5 H13" stroke="#fff" stroke-width="3"/></svg>
<div style="left:1089px;top:497px;width:23px;height:22px;background:#e4e6e8;border:1px solid #c4c4c4"></div>
<svg style="position:absolute;left:1092px;top:499px" width="17" height="17" viewBox="0 0 17 17"><circle cx="8.5" cy="8.5" r="7.5" fill="#d83a2a" stroke="#9a2a1a" stroke-width="0.8"/><path d="M5.5,5.5 L11.5,11.5 M11.5,5.5 L5.5,11.5" stroke="#fff" stroke-width="2.4"/></svg>
<div class="t" style="left:1128px;top:509px;font-size:9.4px;color:#222">(tipo terreno)</div>
<div style="left:960px;top:522px;width:154px;height:21px;background:#fff;border:1px solid #7a7a7a"></div>
<div class="t" style="left:964px;top:527.5px;font-size:11px;color:#222">strato 1</div>
<div style="left:1129px;top:522px;width:95px;height:22px;background:#e3e3e3;border:1px solid #adadad"></div>
<div class="t" style="left:1134px;top:527.5px;font-size:11.5px;font-weight:bold;color:#111">Terreno 1</div>
<svg style="position:absolute;left:1208px;top:530.0px" width="9" height="6" viewBox="0 0 9 6"><path d="M1,1 L4.5,4.5 L8,1" stroke="#444" stroke-width="1" fill="none"/></svg>
<div class="t" style="left:963px;top:554px;font-size:11px;font-weight:bold;color:#222">h =</div>
<div style="left:986px;top:549px;width:54px;height:20px;background:#fff;border:1px solid #7c7c7c"></div>
<div class="t" style="left:989px;top:554px;font-size:11px;color:#222">0</div>
<div style="left:1040px;top:549px;width:20px;height:20px;background:#ddedfa;border:1px solid #5a98c8;border-left:2px solid #4a88c0"></div>
<svg style="position:absolute;left:1040px;top:549px" width="6" height="6" viewBox="0 0 6 6"><path d="M0,0 H6 L0,6Z" fill="#3d80c8"/></svg>
<div class="t" style="left:1043.5px;top:554.0px;font-size:11px;color:#222">cm</div>
<div class="t" style="left:1079px;top:555px;font-size:9.4px;color:#222">(profondità di partenza dello strato)</div>
<div class="t" style="left:967px;top:573px;font-size:11px;font-weight:bold;color:#222">i =</div>
<div style="left:986px;top:569px;width:28px;height:19px;background:#fff;border:1px solid #7c7c7c"></div>
<div class="t" style="left:989px;top:573.5px;font-size:11px;color:#222">0</div>
<div style="left:1013px;top:569px;width:10px;height:19px;background:#ddedfa;border:1px solid #5a98c8;border-left:2px solid #4a88c0"></div>
<svg style="position:absolute;left:1013px;top:569px" width="6" height="6" viewBox="0 0 6 6"><path d="M0,0 H6 L0,6Z" fill="#3d80c8"/></svg>
<div class="t" style="left:1016px;top:570px;font-size:10px">°</div>
<div style="left:1023px;top:569px;width:28px;height:19px;background:#fff;border:1px solid #7c7c7c"></div>
<div class="t" style="left:1026px;top:573.5px;font-size:11px;color:#222">0</div>
<div style="left:1050px;top:569px;width:10px;height:19px;background:#ddedfa;border:1px solid #5a98c8;border-left:2px solid #4a88c0"></div>
<svg style="position:absolute;left:1050px;top:569px" width="6" height="6" viewBox="0 0 6 6"><path d="M0,0 H6 L0,6Z" fill="#3d80c8"/></svg>
<div class="t" style="left:1053px;top:570px;font-size:10px">°</div>
<div class="t" style="left:1080px;top:574px;font-size:9.4px;color:#222">(inclinazione dello strato valle-monte)</div>
<div style="left:963px;top:685px;width:99px;height:22px;background:#e3e3e3;border:1px solid #adadad"></div>
<div class="t" style="left:968px;top:690.5px;font-size:11.5px;font-weight:bold;color:#111">Terreno 3</div>
<svg style="position:absolute;left:1046px;top:693.0px" width="9" height="6" viewBox="0 0 9 6"><path d="M1,1 L4.5,4.5 L8,1" stroke="#444" stroke-width="1" fill="none"/></svg>
<div style="left:1067px;top:685px;width:23px;height:22px;background:#e4e6e8;border:1px solid #c4c4c4"></div>
<svg style="position:absolute;left:1070px;top:687px" width="17" height="17" viewBox="0 0 17 17"><circle cx="8.5" cy="8.5" r="7.5" fill="#2a9a2a" stroke="#1a6a1a" stroke-width="0.8"/><path d="M8.5,4 V13 M4,8.5 H13" stroke="#fff" stroke-width="3"/></svg>
<div style="left:1092px;top:685px;width:23px;height:22px;background:#e4e6e8;border:1px solid #c4c4c4"></div>
<svg style="position:absolute;left:1095px;top:687px" width="17" height="17" viewBox="0 0 17 17"><circle cx="8.5" cy="8.5" r="7.5" fill="#d83a2a" stroke="#9a2a1a" stroke-width="0.8"/><path d="M5.5,5.5 L11.5,11.5 M11.5,5.5 L5.5,11.5" stroke="#fff" stroke-width="2.4"/></svg>
<div style="left:963px;top:709px;width:153px;height:20px;background:#fff;border:1px solid #7a7a7a"></div>
<div class="t" style="left:966px;top:714px;font-size:11px;color:#222">Ghiaia</div>
<div class="t" style="left:959px;top:738px;font-size:11px;color:#222">tipo =</div>
<div style="left:992px;top:731px;width:124px;height:22px;background:#e3e3e3;border:1px solid #adadad"></div>
<div class="t" style="left:997px;top:736.5px;font-size:11.5px;font-weight:bold;color:#111">non coesivo</div>
<svg style="position:absolute;left:1100px;top:739.0px" width="9" height="6" viewBox="0 0 9 6"><path d="M1,1 L4.5,4.5 L8,1" stroke="#444" stroke-width="1" fill="none"/></svg>
<div style="left:1130px;top:685px;width:114px;height:71px;background:#55d843;border:1px solid #555"></div>
<svg style="position:absolute;left:1131px;top:686px" width="112" height="69" viewBox="0 0 112 69"><rect x="0" y="0" width="112" height="69" fill="url(#grn)"/></svg>
<div style="left:1131px;top:731px;width:24px;height:23px;background:#f0f0f0;border:1px solid #bdbdbd;box-shadow:0 0 0 1px #f8f8f8"></div>
<div style="left:1136px;top:735px;width:14px;height:14px;border-radius:50%;background:conic-gradient(from 0deg,#ff3070 0deg,#ff3030 30deg,#ffe020 80deg,#40e040 130deg,#20e0ff 180deg,#2040ff 230deg,#c020ff 290deg,#ff3070 360deg);box-shadow:0 0 0 0.6px #555"></div>
<div class="t" style="left:900px;top:763px;width:90px;text-align:right;font-size:11px;font-style:italic;color:#222">c' =</div>
<div style="left:994px;top:759px;width:35px;height:19px;background:#fff;border:1px solid #7a7a7a"></div>
<div class="t" style="left:997px;top:763.0px;font-size:11px;color:#222">0</div>
<div style="left:1029px;top:759px;width:50px;height:19px;background:#ddedfa;border:1px solid #5a98c8;border-left:2px solid #4a88c0"></div>
<svg style="position:absolute;left:1029px;top:759px" width="6" height="6" viewBox="0 0 6 6"><path d="M0,0 H6 L0,6Z" fill="#3d80c8"/></svg>
<div class="t" style="left:1032.5px;top:763.5px;font-size:11px;color:#222">daN/cm2</div>
<div class="t" style="left:1099px;top:764px;font-size:9.4px;color:#222">(coesione efficace)</div>
<div class="t" style="left:900px;top:782px;width:90px;text-align:right;font-size:11px;font-style:italic;color:#222">φ' =</div>
<div style="left:994px;top:778px;width:35px;height:19px;background:#fff;border:1px solid #7a7a7a"></div>
<div class="t" style="left:997px;top:782.0px;font-size:11px;color:#222">36</div>
<div style="left:1029px;top:778px;width:9px;height:19px;background:#ddedfa;border:1px solid #5a98c8;border-left:2px solid #4a88c0"></div>
<svg style="position:absolute;left:1029px;top:778px" width="6" height="6" viewBox="0 0 6 6"><path d="M0,0 H6 L0,6Z" fill="#3d80c8"/></svg>
<div class="t" style="left:1031px;top:779px;font-size:10px">°</div>
<div style="left:1082px;top:777px;width:19px;height:19px;background:#e4e6e8;border:1px solid #c4c4c4"></div>
<svg style="position:absolute;left:1084px;top:779px" width="16" height="16" viewBox="0 0 16 16"><path d="M4,12 L11,4 Q13,2 14,4 Q15,6 13,8 L7,14 Q4,16 3,13 Q2,11 5,9 L10,4" stroke="#555" stroke-width="1.3" fill="none"/></svg>
<div class="t" style="left:1105px;top:783px;font-size:9.4px;color:#222">(angolo di attrito interno)</div>
<div class="t" style="left:900px;top:801px;width:90px;text-align:right;font-size:11px;font-style:italic;color:#222">Cu =</div>
<div style="left:994px;top:797px;width:35px;height:19px;background:#f0f0f0;border:1px solid #dadada"></div>
<div class="t" style="left:997px;top:801.0px;font-size:11px;color:#8a8a8a">0.01</div>
<div style="left:1029px;top:797px;width:50px;height:19px;background:#ddedfa;border:1px solid #5a98c8;border-left:2px solid #4a88c0"></div>
<svg style="position:absolute;left:1029px;top:797px" width="6" height="6" viewBox="0 0 6 6"><path d="M0,0 H6 L0,6Z" fill="#3d80c8"/></svg>
<div class="t" style="left:1032.5px;top:801.5px;font-size:11px;color:#222">daN/cm2</div>
<div style="left:1082px;top:796px;width:19px;height:19px;background:#e4e6e8;border:1px solid #c4c4c4"></div>
<svg style="position:absolute;left:1084px;top:798px" width="16" height="16" viewBox="0 0 16 16"><path d="M4,12 L11,4 Q13,2 14,4 Q15,6 13,8 L7,14 Q4,16 3,13 Q2,11 5,9 L10,4" stroke="#555" stroke-width="1.3" fill="none"/></svg>
<div class="t" style="left:1105px;top:802px;font-size:9.4px;color:#222">(resistenza al taglio non drenata)</div>
<div class="t" style="left:900px;top:820px;width:90px;text-align:right;font-size:11px;font-style:italic;color:#222">qu =</div>
<div style="left:994px;top:816px;width:35px;height:19px;background:#f0f0f0;border:1px solid #dadada"></div>
<div class="t" style="left:997px;top:820.0px;font-size:11px;color:#8a8a8a">250</div>
<div style="left:1029px;top:816px;width:50px;height:19px;background:#ddedfa;border:1px solid #5a98c8;border-left:2px solid #4a88c0"></div>
<svg style="position:absolute;left:1029px;top:816px" width="6" height="6" viewBox="0 0 6 6"><path d="M0,0 H6 L0,6Z" fill="#3d80c8"/></svg>
<div class="t" style="left:1032.5px;top:820.5px;font-size:11px;color:#222">daN/cm2</div>
<div style="left:1099px;top:820px;width:170px;height:12px;overflow:hidden"><div class="t" style="left:0;top:1px;font-size:9.4px;color:#222">(resistenza a comp. monoassiale della roccia)</div></div>
<div class="t" style="left:900px;top:839px;width:90px;text-align:right;font-size:11px;font-style:italic;color:#222">gd =</div>
<div style="left:994px;top:835px;width:49px;height:19px;background:#fff;border:1px solid #7a7a7a"></div>
<div class="t" style="left:997px;top:839.0px;font-size:11px;color:#222">0.0021</div>
<div style="left:1043px;top:835px;width:50px;height:19px;background:#ddedfa;border:1px solid #5a98c8;border-left:2px solid #4a88c0"></div>
<svg style="position:absolute;left:1043px;top:835px" width="6" height="6" viewBox="0 0 6 6"><path d="M0,0 H6 L0,6Z" fill="#3d80c8"/></svg>
<div class="t" style="left:1046.5px;top:839.5px;font-size:11px;color:#222">daN/cm3</div>
<div class="t" style="left:1099px;top:840px;font-size:9.4px;color:#222">(peso di volume secco)</div>
<div class="t" style="left:900px;top:858px;width:90px;text-align:right;font-size:11px;font-style:italic;color:#222">gt =</div>
<div style="left:994px;top:854px;width:49px;height:19px;background:#fff;border:1px solid #7a7a7a"></div>
<div class="t" style="left:997px;top:858.0px;font-size:11px;color:#222">0.0022</div>
<div style="left:1043px;top:854px;width:50px;height:19px;background:#ddedfa;border:1px solid #5a98c8;border-left:2px solid #4a88c0"></div>
<svg style="position:absolute;left:1043px;top:854px" width="6" height="6" viewBox="0 0 6 6"><path d="M0,0 H6 L0,6Z" fill="#3d80c8"/></svg>
<div class="t" style="left:1046.5px;top:858.5px;font-size:11px;color:#222">daN/cm3</div>
<div class="t" style="left:1099px;top:859px;font-size:9.4px;color:#222">(peso di volume saturo)</div>
<div style="left:968px;top:874px;width:270px;height:24px;background:#d8f5d0"></div>
<div class="t" style="left:900px;top:882px;width:90px;text-align:right;font-size:11px;font-style:italic;color:#222">G =</div>
<div style="left:994px;top:877px;width:35px;height:20px;background:#fff;border:1px solid #7a7a7a"></div>
<div class="t" style="left:997px;top:881.5px;font-size:11px;color:#222">300</div>
<div style="left:1029px;top:877px;width:50px;height:20px;background:#ddedfa;border:1px solid #5a98c8;border-left:2px solid #4a88c0"></div>
<svg style="position:absolute;left:1029px;top:877px" width="6" height="6" viewBox="0 0 6 6"><path d="M0,0 H6 L0,6Z" fill="#3d80c8"/></svg>
<div class="t" style="left:1032.5px;top:882.0px;font-size:11px;color:#222">daN/cm2</div>
<div style="left:1085px;top:877px;width:48px;height:20px;background:#fff;border:1px solid #7a7a7a"></div>
<div class="t" style="left:1088px;top:881.5px;font-size:11px;color:#222">0.15</div>
<div class="t" style="left:1142px;top:877px;font-size:9.4px;color:#222">(modulo di taglio)</div>
<div class="t" style="left:1142px;top:888px;font-size:9.4px;color:#222">(coeff. Poisson)</div>
<div style="left:1220px;top:877px;width:16px;height:20px;background:#e4e6e8;border:1px solid #c4c4c4"></div>
<div class="t" style="left:1225px;top:882px;font-size:12px;font-weight:bold;color:#000">&lt;</div>
<div class="t" style="left:900px;top:905px;width:90px;text-align:right;font-size:11px;font-style:italic;color:#222">K0 =</div>
<div style="left:994px;top:900px;width:30px;height:20px;background:#f0f0f0;border:1px solid #dadada"></div>
<div class="t" style="left:997px;top:904.5px;font-size:11px;color:#8a8a8a">0.41</div>
<div style="left:1027px;top:900px;width:19px;height:20px;background:#e4e6e8;border:1px solid #c4c4c4"></div>
<svg style="position:absolute;left:1029px;top:902px" width="16" height="16" viewBox="0 0 16 16"><path d="M3,8 A5,5 0 0 1 12,5 M13,8 A5,5 0 0 1 4,11" stroke="#3a88d8" stroke-width="2.4" fill="none"/><path d="M10,2 L14,6 L9,7Z M6,14 L2,10 L7,9Z" fill="#3a88d8"/></svg>
<div class="t" style="left:1049px;top:905px;font-size:9.4px;color:#222">(Spinte con K0 se si abilita il metodo nelle opzioni)</div>
<div style="left:0;top:962px;width:1280px;height:22px;background:#f0f0f0;border-top:1px solid #fff"></div>
<div class="t" style="left:154px;top:968.5px;font-size:12px;color:#111">Nessun comando attivo</div>
<div class="t" style="left:317px;top:968.5px;font-size:12px;color:#111;transform:scaleX(0.973);transform-origin:0 0">Selezionare una nuova funzione.</div>
<div class="t" style="left:544px;top:968.5px;font-size:12px;color:#111;transform:scaleX(0.934);transform-origin:0 0">valori cursore :</div>
<div class="t" style="left:627.8px;top:968.5px;font-size:12px;color:#111;transform:scaleX(0.874);transform-origin:0 0">x: 231.67</div>
<div class="t" style="left:679.4px;top:968.5px;font-size:12px;color:#111;transform:scaleX(0.912);transform-origin:0 0">z: -115.91</div>
<svg style="position:absolute;left:1238px;top:967px" width="28" height="15"><rect x="1" y="1" width="5.5" height="12" fill="#2a8a4a"/><rect x="6.5" y="1" width="5" height="12" fill="#fafafa"/><rect x="11.5" y="1" width="5.5" height="12" fill="#e82a2a"/><path d="M19,6 L24,6 L21.5,9Z" fill="#000"/></svg>
</body></html>
